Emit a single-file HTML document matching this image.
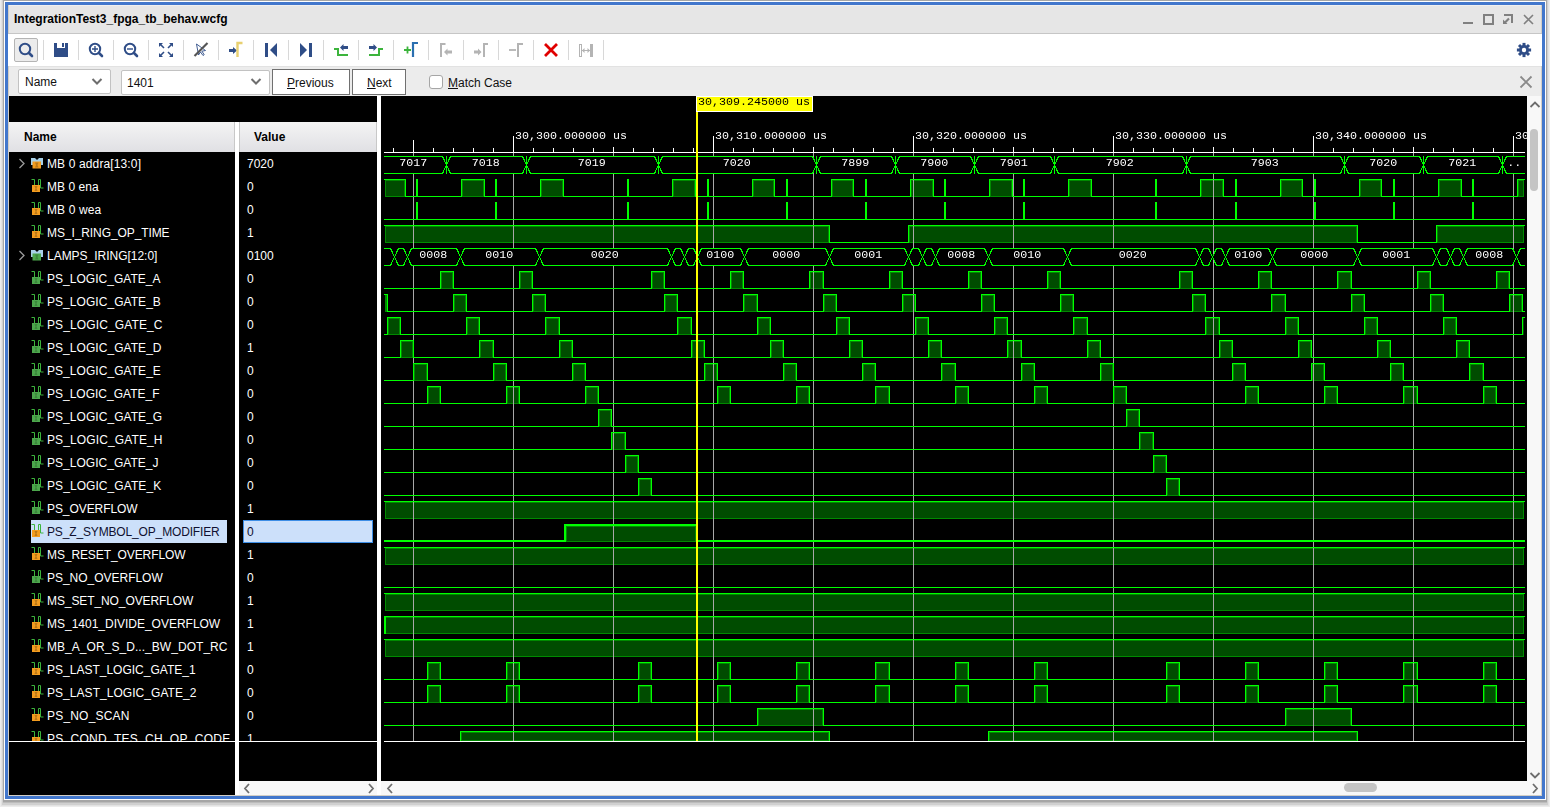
<!DOCTYPE html>
<html><head><meta charset="utf-8"><style>
html,body{margin:0;padding:0;}
body{width:1550px;height:807px;position:relative;overflow:hidden;background:#fff;font-family:"Liberation Sans",sans-serif;}
.abs{position:absolute;}
.t12{font-size:12px;white-space:nowrap;}
</style></head><body>
<div class="abs" style="left:0;top:0;width:1550px;height:807px;background:#ececec"></div>
<div class="abs" style="left:1px;top:0;width:1548px;height:806px;background:#e2e2e2"></div>
<div class="abs" style="left:2px;top:0;width:1546px;height:805px;background:#d0d0d0"></div>
<div class="abs" style="left:3px;top:0;width:1544px;height:803px;background:#bcbcbc"></div>
<div class="abs" style="left:3px;top:0;width:1544px;height:802px;background:#a6a6a6"></div>
<div class="abs" style="left:4px;top:1px;width:1542px;height:799px;background:#fff"></div>
<div class="abs" style="left:5px;top:2px;width:1540px;height:797px;background:#4277cc"></div>
<div class="abs" style="left:8px;top:5px;width:1534px;height:791px;background:#d2cec6"></div>
<div class="abs" style="left:9px;top:5px;width:1532px;height:790px;background:#f0f0f0"></div>
<!-- title -->
<div class="abs" style="left:9px;top:6px;width:1532px;height:27px;background:#e6e6e6"></div>
<div class="abs" style="left:8px;top:33px;width:1534px;height:1px;background:#c6c6c6"></div>
<div class="abs t12" style="left:14px;top:11px;line-height:16px;font-weight:bold;color:#000">IntegrationTest3_fpga_tb_behav.wcfg</div>
<svg class="abs" style="left:1460px;top:10px" width="80" height="18" viewBox="1460 10 80 18">
<rect x="1463" y="22" width="10" height="2" fill="#808080"/>
<rect x="1484" y="15" width="9" height="9" stroke="#808080" stroke-width="2" fill="none"/>
<path d="M1504 15h8v8" stroke="#808080" stroke-width="2" fill="none"/><path d="M1509 18.5l-4 4" stroke="#808080" stroke-width="2.2"/><path d="M1503 19.5v4.5h4.5z" fill="#808080"/>
<path d="M1524 15l9 9M1533 15l-9 9" stroke="#808080" stroke-width="1.6"/>
</svg>
<!-- toolbar -->
<div class="abs" style="left:8px;top:34px;width:1534px;height:32px;background:#fff"></div>
<div class="abs" style="left:43px;top:40px;width:1px;height:20px;background:#d8d8d8"></div><div class="abs" style="left:78px;top:40px;width:1px;height:20px;background:#d8d8d8"></div><div class="abs" style="left:113px;top:40px;width:1px;height:20px;background:#d8d8d8"></div><div class="abs" style="left:148px;top:40px;width:1px;height:20px;background:#d8d8d8"></div><div class="abs" style="left:183px;top:40px;width:1px;height:20px;background:#d8d8d8"></div><div class="abs" style="left:218px;top:40px;width:1px;height:20px;background:#d8d8d8"></div><div class="abs" style="left:253px;top:40px;width:1px;height:20px;background:#d8d8d8"></div><div class="abs" style="left:288px;top:40px;width:1px;height:20px;background:#d8d8d8"></div><div class="abs" style="left:323px;top:40px;width:1px;height:20px;background:#d8d8d8"></div><div class="abs" style="left:358px;top:40px;width:1px;height:20px;background:#d8d8d8"></div><div class="abs" style="left:393px;top:40px;width:1px;height:20px;background:#d8d8d8"></div><div class="abs" style="left:428px;top:40px;width:1px;height:20px;background:#d8d8d8"></div><div class="abs" style="left:463px;top:40px;width:1px;height:20px;background:#d8d8d8"></div><div class="abs" style="left:498px;top:40px;width:1px;height:20px;background:#d8d8d8"></div><div class="abs" style="left:533px;top:40px;width:1px;height:20px;background:#d8d8d8"></div><div class="abs" style="left:568px;top:40px;width:1px;height:20px;background:#d8d8d8"></div><div class="abs" style="left:603px;top:40px;width:1px;height:20px;background:#d8d8d8"></div>
<div class="abs" style="left:14px;top:38px;width:22px;height:22px;background:#ececec;border:1px solid #b4b4b4;border-radius:2px"></div><svg class="abs" style="left:16px;top:40px" width="20" height="20" viewBox="16 40 20 20"><circle cx="25" cy="49" r="5.2" stroke="#2f4d87" stroke-width="2" fill="none"/><path d="M29 53l3 3" stroke="#2f4d87" stroke-width="2.6" stroke-linecap="round"/></svg><svg class="abs" style="left:51px;top:40px" width="20" height="20" viewBox="51 40 20 20"><path d="M54 43h3v5h8v-5h3v14h-14z" fill="#2f4d87"/><rect x="62" y="43" width="2" height="4" fill="#2f4d87"/></svg><svg class="abs" style="left:86px;top:40px" width="20" height="20" viewBox="86 40 20 20"><circle cx="95" cy="49" r="5.2" stroke="#2f4d87" stroke-width="2" fill="none"/><path d="M99 53l3 3" stroke="#2f4d87" stroke-width="2.6" stroke-linecap="round"/><path d="M92 49h6M95 46v6" stroke="#2f4d87" stroke-width="1.4"/></svg><svg class="abs" style="left:121px;top:40px" width="20" height="20" viewBox="121 40 20 20"><circle cx="130" cy="49" r="5.2" stroke="#2f4d87" stroke-width="2" fill="none"/><path d="M134 53l3 3" stroke="#2f4d87" stroke-width="2.6" stroke-linecap="round"/><path d="M127 49h6" stroke="#2f4d87" stroke-width="1.4"/></svg><svg class="abs" style="left:156px;top:40px" width="20" height="20" viewBox="156 40 20 20"><path d="M159 43h4l-4 4z M173 43v4l-4-4z M159 57v-4l4 4z M173 57h-4l4-4z" fill="#2f4d87"/><path d="M160 44l4 4 M172 44l-4 4 M160 56l4-4 M172 56l-4-4" stroke="#2f4d87" stroke-width="1.6"/></svg><svg class="abs" style="left:191px;top:40px" width="20" height="20" viewBox="191 40 20 20"><path d="M196.5 44l2 11 2-3 2.5 3.5 1.2-0.8-2.3-3.5 3.6-0.7z" stroke="#2f4d87" stroke-width="0.9" fill="none"/><path d="M194.5 56l13-13" stroke="#555" stroke-width="2.2"/></svg><svg class="abs" style="left:226px;top:40px" width="20" height="20" viewBox="226 40 20 20"><path d="M229 49h4v-2l4 3.5-4 3.5v-2h-4z" fill="#2f4d87"/><path d="M237.5 57v-14h5" stroke="#e8d070" stroke-width="2.4" fill="none"/></svg><svg class="abs" style="left:261px;top:40px" width="20" height="20" viewBox="261 40 20 20"><rect x="265" y="43" width="3" height="14" fill="#2f4d87"/><path d="M277 43v14l-7-7z" fill="#2f4d87"/></svg><svg class="abs" style="left:296px;top:40px" width="20" height="20" viewBox="296 40 20 20"><rect x="309" y="43" width="3" height="14" fill="#2f4d87"/><path d="M300 43v14l7-7z" fill="#2f4d87"/></svg><svg class="abs" style="left:331px;top:40px" width="20" height="20" viewBox="331 40 20 20"><path d="M334 49h4v6h10" stroke="#3cb43c" stroke-width="2" fill="none"/><path d="M340 47.5l3.5-3.5v2h4.5v3h-4.5v2z" fill="#2f4d87"/></svg><svg class="abs" style="left:366px;top:40px" width="20" height="20" viewBox="366 40 20 20"><path d="M369 55h10v-6h4" stroke="#3cb43c" stroke-width="2" fill="none"/><path d="M369 46h4.5v-2l3.5 3.5-3.5 3.5v-2h-4.5z" fill="#2f4d87"/></svg><svg class="abs" style="left:401px;top:40px" width="20" height="20" viewBox="401 40 20 20"><path d="M404 50h7M407.5 46.5v7" stroke="#3cb43c" stroke-width="1.8"/><path d="M413 57v-14h5" stroke="#2a6fb0" stroke-width="2.2" fill="none"/></svg><svg class="abs" style="left:436px;top:40px" width="20" height="20" viewBox="436 40 20 20"><path d="M441 57v-13h4.5" stroke="#b4b4b4" stroke-width="2" fill="none"/><path d="M444 52l3.5-3.5v2h4.5v3h-4.5v2z" fill="#b4b4b4"/></svg><svg class="abs" style="left:471px;top:40px" width="20" height="20" viewBox="471 40 20 20"><path d="M474 50.5h4v-2l3.5 3.5-3.5 3.5v-2h-4z" fill="#b4b4b4"/><path d="M484 57v-13h4" stroke="#b4b4b4" stroke-width="2" fill="none"/></svg><svg class="abs" style="left:506px;top:40px" width="20" height="20" viewBox="506 40 20 20"><path d="M509 50h7" stroke="#b4b4b4" stroke-width="1.8"/><path d="M518 57v-13h5" stroke="#b4b4b4" stroke-width="2" fill="none"/></svg><svg class="abs" style="left:541px;top:40px" width="20" height="20" viewBox="541 40 20 20"><path d="M545 44l12 12M557 44l-12 12" stroke="#e00000" stroke-width="2.8"/></svg><svg class="abs" style="left:576px;top:40px" width="20" height="20" viewBox="576 40 20 20"><rect x="579.5" y="44.5" width="2" height="12" stroke="#b4b4b4" stroke-width="1" fill="none"/><rect x="590" y="44" width="3" height="13" fill="#b4b4b4"/><path d="M582 50.5h8" stroke="#b4b4b4" stroke-width="1"/><path d="M582 50.5l2.5-2.5v5z M590 50.5l-2.5-2.5v5z" fill="#b4b4b4"/></svg>
<svg class="abs" style="left:1515px;top:41px" width="18" height="18" viewBox="-9 -9 18 18"><g fill="#2f4d87"><rect x="-1.5" y="-7.1" width="3" height="4" transform="rotate(0)"/><rect x="-1.5" y="-7.1" width="3" height="4" transform="rotate(45)"/><rect x="-1.5" y="-7.1" width="3" height="4" transform="rotate(90)"/><rect x="-1.5" y="-7.1" width="3" height="4" transform="rotate(135)"/><rect x="-1.5" y="-7.1" width="3" height="4" transform="rotate(180)"/><rect x="-1.5" y="-7.1" width="3" height="4" transform="rotate(225)"/><rect x="-1.5" y="-7.1" width="3" height="4" transform="rotate(270)"/><rect x="-1.5" y="-7.1" width="3" height="4" transform="rotate(315)"/><circle r="4.9"/></g><circle r="2.2" fill="#fff"/></svg>
<!-- search bar -->
<div class="abs" style="left:9px;top:66px;width:1532px;height:30px;background:#ececec"></div><div class="abs" style="left:9px;top:66px;width:1532px;height:1px;background:#e2e2e2"></div>
<div class="abs" style="left:18px;top:69px;width:91px;height:23px;background:#fff;border:1px solid #c2c2c2;border-radius:2px"></div>
<div class="abs t12" style="left:25px;top:74px;line-height:16px;color:#111">Name</div>
<svg class="abs" style="left:91px;top:77px" width="12" height="9" viewBox="0 0 12 9"><path d="M1.5 2l4.5 4.5 4.5-4.5" stroke="#6e6e6e" stroke-width="2" fill="none"/></svg>
<div class="abs" style="left:121px;top:70px;width:147px;height:23px;background:#fff;border:1px solid #c2c2c2;border-radius:2px"></div>
<div class="abs t12" style="left:127px;top:75px;line-height:16px;color:#111">1401</div>
<svg class="abs" style="left:250px;top:77px" width="12" height="9" viewBox="0 0 12 9"><path d="M1.5 2l4.5 4.5 4.5-4.5" stroke="#6e6e6e" stroke-width="2" fill="none"/></svg>
<div class="abs" style="left:272px;top:69px;width:76px;height:24px;background:#fff;border:1px solid #707070"></div>
<div class="abs t12" style="left:287px;top:75px;line-height:16px;color:#111"><u>P</u>revious</div>
<div class="abs" style="left:352px;top:69px;width:52px;height:24px;background:#fff;border:1px solid #707070"></div>
<div class="abs t12" style="left:367px;top:75px;line-height:16px;color:#111"><u>N</u>ext</div>
<div class="abs" style="left:429px;top:75px;width:12px;height:12px;background:#fff;border:1px solid #a6a6a6;border-radius:3px"></div>
<div class="abs t12" style="left:448px;top:75px;line-height:16px;color:#111"><u>M</u>atch Case</div>
<svg class="abs" style="left:1518px;top:74px" width="16" height="16" viewBox="0 0 16 16"><path d="M2.5 2.5l11 11M13.5 2.5l-11 11" stroke="#8a8a8a" stroke-width="1.8"/></svg>
<!-- panels -->
<div class="abs" style="left:9px;top:96px;width:368px;height:26px;background:#000"></div>
<div class="abs" style="left:9px;top:122px;width:226px;height:673px;background:#000"></div>
<div class="abs" style="left:235px;top:122px;width:4px;height:673px;background:#fff"></div>
<div class="abs" style="left:239px;top:122px;width:138px;height:659px;background:#000"></div>
<div class="abs" style="left:377px;top:96px;width:4px;height:699px;background:#fff"></div>
<div class="abs" style="left:381px;top:96px;width:1146px;height:685px;background:#000"></div>
<div class="abs" style="left:1527px;top:96px;width:14px;height:685px;background:#f8f8f8"></div>
<div class="abs" style="left:239px;top:781px;width:138px;height:14px;background:#f8f8f8"></div>
<div class="abs" style="left:381px;top:781px;width:1160px;height:14px;background:#f8f8f8"></div>
<!-- headers -->
<div class="abs" style="left:9px;top:122px;width:225px;height:30px;background:linear-gradient(#f4f4f4,#e0e0e4);border-right:1px solid #c8c8c8"></div>
<div class="abs" style="left:239px;top:122px;width:136px;height:30px;background:linear-gradient(#f4f4f4,#e0e0e4);border-right:1px solid #c8c8c8;border-left:1px solid #c8c8c8"></div>
<div class="abs t12" style="left:24px;top:129px;line-height:16px;font-weight:bold;color:#000">Name</div>
<div class="abs t12" style="left:254px;top:129px;line-height:16px;font-weight:bold;color:#000">Value</div>
<!-- list -->
<div class="abs" style="left:9px;top:152px;width:226px;height:589px;overflow:hidden">
<div class="abs" style="left:-9px;top:-152px;width:300px;height:800px"><svg class="abs" style="left:18px;top:158px" width="8" height="11" viewBox="0 0 8 11"><path d="M1.5 1l4.5 4.5-4.5 4.5" stroke="#9a9a9a" stroke-width="1.3" fill="none"/></svg><svg class="abs" style="left:31px;top:158px" width="13" height="12" viewBox="0 0 13 12"><path d="M0 0h4l2 2 2-2h4v7h-12z" fill="#a8d0e8"/><rect x="1.5" y="3.5" width="8.5" height="7" fill="#f39c1f"/><path d="M4 4.5h3.5l-1 2.5 1 2.5h-3.5l1-2.5z" fill="#8a5a10" opacity="0.55"/></svg><div class="abs t12" style="left:47px;top:153px;line-height:23px;color:#fff;letter-spacing:0.127px">MB 0 addra[13:0]</div><svg class="abs" style="left:31px;top:179px" width="13" height="14" viewBox="0 0 13 14"><path d="M0.5 0.5h3v6 M7.5 6v-5.5h2v8.5h3" stroke="#3cb43c" stroke-width="1" fill="none"/><rect x="1" y="6" width="8" height="7" fill="#f39c1f"/><path d="M3.5 7h3l-1 2.5 1 2.5h-3l1-2.5z" fill="#8a5a10" opacity="0.55"/></svg><div class="abs t12" style="left:47px;top:176px;line-height:23px;color:#fff;letter-spacing:0.043px">MB 0 ena</div><svg class="abs" style="left:31px;top:202px" width="13" height="14" viewBox="0 0 13 14"><path d="M0.5 0.5h3v6 M7.5 6v-5.5h2v8.5h3" stroke="#3cb43c" stroke-width="1" fill="none"/><rect x="1" y="6" width="8" height="7" fill="#f39c1f"/><path d="M3.5 7h3l-1 2.5 1 2.5h-3l1-2.5z" fill="#8a5a10" opacity="0.55"/></svg><div class="abs t12" style="left:47px;top:199px;line-height:23px;color:#fff;letter-spacing:0.114px">MB 0 wea</div><svg class="abs" style="left:31px;top:225px" width="13" height="14" viewBox="0 0 13 14"><path d="M0.5 0.5h3v6 M7.5 6v-5.5h2v8.5h3" stroke="#3cb43c" stroke-width="1" fill="none"/><rect x="1" y="6" width="8" height="7" fill="#f39c1f"/><path d="M3.5 7h3l-1 2.5 1 2.5h-3l1-2.5z" fill="#8a5a10" opacity="0.55"/></svg><div class="abs t12" style="left:47px;top:222px;line-height:23px;color:#fff;letter-spacing:-0.088px">MS_I_RING_OP_TIME</div><svg class="abs" style="left:18px;top:250px" width="8" height="11" viewBox="0 0 8 11"><path d="M1.5 1l4.5 4.5-4.5 4.5" stroke="#9a9a9a" stroke-width="1.3" fill="none"/></svg><svg class="abs" style="left:31px;top:250px" width="13" height="12" viewBox="0 0 13 12"><path d="M0 0h4l2 2 2-2h4v7h-12z" fill="#a8d0e8"/><rect x="1.5" y="3.5" width="8.5" height="7" fill="#4ca64c"/><path d="M4 4.5h3.5l-1 2.5 1 2.5h-3.5l1-2.5z" fill="#2d6e2d" opacity="0.55"/></svg><div class="abs t12" style="left:47px;top:245px;line-height:23px;color:#fff;letter-spacing:-0.019px">LAMPS_IRING[12:0]</div><svg class="abs" style="left:31px;top:271px" width="13" height="14" viewBox="0 0 13 14"><path d="M0.5 0.5h3v6 M7.5 6v-5.5h2v8.5h3" stroke="#3cb43c" stroke-width="1" fill="none"/><rect x="1" y="6" width="8" height="7" fill="#4ca64c"/><path d="M3.5 7h3l-1 2.5 1 2.5h-3l1-2.5z" fill="#2d6e2d" opacity="0.55"/></svg><div class="abs t12" style="left:47px;top:268px;line-height:23px;color:#fff;letter-spacing:0.021px">PS_LOGIC_GATE_A</div><svg class="abs" style="left:31px;top:294px" width="13" height="14" viewBox="0 0 13 14"><path d="M0.5 0.5h3v6 M7.5 6v-5.5h2v8.5h3" stroke="#3cb43c" stroke-width="1" fill="none"/><rect x="1" y="6" width="8" height="7" fill="#4ca64c"/><path d="M3.5 7h3l-1 2.5 1 2.5h-3l1-2.5z" fill="#2d6e2d" opacity="0.55"/></svg><div class="abs t12" style="left:47px;top:291px;line-height:23px;color:#fff;letter-spacing:0.05px">PS_LOGIC_GATE_B</div><svg class="abs" style="left:31px;top:317px" width="13" height="14" viewBox="0 0 13 14"><path d="M0.5 0.5h3v6 M7.5 6v-5.5h2v8.5h3" stroke="#3cb43c" stroke-width="1" fill="none"/><rect x="1" y="6" width="8" height="7" fill="#4ca64c"/><path d="M3.5 7h3l-1 2.5 1 2.5h-3l1-2.5z" fill="#2d6e2d" opacity="0.55"/></svg><div class="abs t12" style="left:47px;top:314px;line-height:23px;color:#fff;letter-spacing:0.121px">PS_LOGIC_GATE_C</div><svg class="abs" style="left:31px;top:340px" width="13" height="14" viewBox="0 0 13 14"><path d="M0.5 0.5h3v6 M7.5 6v-5.5h2v8.5h3" stroke="#3cb43c" stroke-width="1" fill="none"/><rect x="1" y="6" width="8" height="7" fill="#4ca64c"/><path d="M3.5 7h3l-1 2.5 1 2.5h-3l1-2.5z" fill="#2d6e2d" opacity="0.55"/></svg><div class="abs t12" style="left:47px;top:337px;line-height:23px;color:#fff;letter-spacing:0.05px">PS_LOGIC_GATE_D</div><svg class="abs" style="left:31px;top:363px" width="13" height="14" viewBox="0 0 13 14"><path d="M0.5 0.5h3v6 M7.5 6v-5.5h2v8.5h3" stroke="#3cb43c" stroke-width="1" fill="none"/><rect x="1" y="6" width="8" height="7" fill="#4ca64c"/><path d="M3.5 7h3l-1 2.5 1 2.5h-3l1-2.5z" fill="#2d6e2d" opacity="0.55"/></svg><div class="abs t12" style="left:47px;top:360px;line-height:23px;color:#fff;letter-spacing:0.05px">PS_LOGIC_GATE_E</div><svg class="abs" style="left:31px;top:386px" width="13" height="14" viewBox="0 0 13 14"><path d="M0.5 0.5h3v6 M7.5 6v-5.5h2v8.5h3" stroke="#3cb43c" stroke-width="1" fill="none"/><rect x="1" y="6" width="8" height="7" fill="#4ca64c"/><path d="M3.5 7h3l-1 2.5 1 2.5h-3l1-2.5z" fill="#2d6e2d" opacity="0.55"/></svg><div class="abs t12" style="left:47px;top:383px;line-height:23px;color:#fff;letter-spacing:0.0px">PS_LOGIC_GATE_F</div><svg class="abs" style="left:31px;top:409px" width="13" height="14" viewBox="0 0 13 14"><path d="M0.5 0.5h3v6 M7.5 6v-5.5h2v8.5h3" stroke="#3cb43c" stroke-width="1" fill="none"/><rect x="1" y="6" width="8" height="7" fill="#4ca64c"/><path d="M3.5 7h3l-1 2.5 1 2.5h-3l1-2.5z" fill="#2d6e2d" opacity="0.55"/></svg><div class="abs t12" style="left:47px;top:406px;line-height:23px;color:#fff;letter-spacing:0.05px">PS_LOGIC_GATE_G</div><svg class="abs" style="left:31px;top:432px" width="13" height="14" viewBox="0 0 13 14"><path d="M0.5 0.5h3v6 M7.5 6v-5.5h2v8.5h3" stroke="#3cb43c" stroke-width="1" fill="none"/><rect x="1" y="6" width="8" height="7" fill="#4ca64c"/><path d="M3.5 7h3l-1 2.5 1 2.5h-3l1-2.5z" fill="#2d6e2d" opacity="0.55"/></svg><div class="abs t12" style="left:47px;top:429px;line-height:23px;color:#fff;letter-spacing:0.121px">PS_LOGIC_GATE_H</div><svg class="abs" style="left:31px;top:455px" width="13" height="14" viewBox="0 0 13 14"><path d="M0.5 0.5h3v6 M7.5 6v-5.5h2v8.5h3" stroke="#3cb43c" stroke-width="1" fill="none"/><rect x="1" y="6" width="8" height="7" fill="#4ca64c"/><path d="M3.5 7h3l-1 2.5 1 2.5h-3l1-2.5z" fill="#2d6e2d" opacity="0.55"/></svg><div class="abs t12" style="left:47px;top:452px;line-height:23px;color:#fff;letter-spacing:0.021px">PS_LOGIC_GATE_J</div><svg class="abs" style="left:31px;top:478px" width="13" height="14" viewBox="0 0 13 14"><path d="M0.5 0.5h3v6 M7.5 6v-5.5h2v8.5h3" stroke="#3cb43c" stroke-width="1" fill="none"/><rect x="1" y="6" width="8" height="7" fill="#4ca64c"/><path d="M3.5 7h3l-1 2.5 1 2.5h-3l1-2.5z" fill="#2d6e2d" opacity="0.55"/></svg><div class="abs t12" style="left:47px;top:475px;line-height:23px;color:#fff;letter-spacing:0.071px">PS_LOGIC_GATE_K</div><svg class="abs" style="left:31px;top:501px" width="13" height="14" viewBox="0 0 13 14"><path d="M0.5 0.5h3v6 M7.5 6v-5.5h2v8.5h3" stroke="#3cb43c" stroke-width="1" fill="none"/><rect x="1" y="6" width="8" height="7" fill="#4ca64c"/><path d="M3.5 7h3l-1 2.5 1 2.5h-3l1-2.5z" fill="#2d6e2d" opacity="0.55"/></svg><div class="abs t12" style="left:47px;top:498px;line-height:23px;color:#fff;letter-spacing:-0.07px">PS_OVERFLOW</div><div class="abs" style="left:31px;top:520px;width:196px;height:23px;background:#cce0fa"></div><svg class="abs" style="left:31px;top:524px" width="13" height="14" viewBox="0 0 13 14"><path d="M0.5 0.5h3v6 M7.5 6v-5.5h2v8.5h3" stroke="#3cb43c" stroke-width="1" fill="none"/><rect x="1" y="6" width="8" height="7" fill="#f39c1f"/><path d="M3.5 7h3l-1 2.5 1 2.5h-3l1-2.5z" fill="#8a5a10" opacity="0.55"/></svg><div class="abs t12" style="left:47px;top:521px;line-height:23px;color:#101030;letter-spacing:-0.15px">PS_Z_SYMBOL_OP_MODIFIER</div><svg class="abs" style="left:31px;top:547px" width="13" height="14" viewBox="0 0 13 14"><path d="M0.5 0.5h3v6 M7.5 6v-5.5h2v8.5h3" stroke="#3cb43c" stroke-width="1" fill="none"/><rect x="1" y="6" width="8" height="7" fill="#f39c1f"/><path d="M3.5 7h3l-1 2.5 1 2.5h-3l1-2.5z" fill="#8a5a10" opacity="0.55"/></svg><div class="abs t12" style="left:47px;top:544px;line-height:23px;color:#fff;letter-spacing:-0.094px">MS_RESET_OVERFLOW</div><svg class="abs" style="left:31px;top:570px" width="13" height="14" viewBox="0 0 13 14"><path d="M0.5 0.5h3v6 M7.5 6v-5.5h2v8.5h3" stroke="#3cb43c" stroke-width="1" fill="none"/><rect x="1" y="6" width="8" height="7" fill="#4ca64c"/><path d="M3.5 7h3l-1 2.5 1 2.5h-3l1-2.5z" fill="#2d6e2d" opacity="0.55"/></svg><div class="abs t12" style="left:47px;top:567px;line-height:23px;color:#fff;letter-spacing:-0.023px">PS_NO_OVERFLOW</div><svg class="abs" style="left:31px;top:593px" width="13" height="14" viewBox="0 0 13 14"><path d="M0.5 0.5h3v6 M7.5 6v-5.5h2v8.5h3" stroke="#3cb43c" stroke-width="1" fill="none"/><rect x="1" y="6" width="8" height="7" fill="#f39c1f"/><path d="M3.5 7h3l-1 2.5 1 2.5h-3l1-2.5z" fill="#8a5a10" opacity="0.55"/></svg><div class="abs t12" style="left:47px;top:590px;line-height:23px;color:#fff;letter-spacing:-0.094px">MS_SET_NO_OVERFLOW</div><svg class="abs" style="left:31px;top:616px" width="13" height="14" viewBox="0 0 13 14"><path d="M0.5 0.5h3v6 M7.5 6v-5.5h2v8.5h3" stroke="#3cb43c" stroke-width="1" fill="none"/><rect x="1" y="6" width="8" height="7" fill="#f39c1f"/><path d="M3.5 7h3l-1 2.5 1 2.5h-3l1-2.5z" fill="#8a5a10" opacity="0.55"/></svg><div class="abs t12" style="left:47px;top:613px;line-height:23px;color:#fff;letter-spacing:-0.009px">MS_1401_DIVIDE_OVERFLOW</div><svg class="abs" style="left:31px;top:639px" width="13" height="14" viewBox="0 0 13 14"><path d="M0.5 0.5h3v6 M7.5 6v-5.5h2v8.5h3" stroke="#3cb43c" stroke-width="1" fill="none"/><rect x="1" y="6" width="8" height="7" fill="#f39c1f"/><path d="M3.5 7h3l-1 2.5 1 2.5h-3l1-2.5z" fill="#8a5a10" opacity="0.55"/></svg><div class="abs t12" style="left:47px;top:636px;line-height:23px;color:#fff;letter-spacing:0.048px">MB_A_OR_S_D..._BW_DOT_RC</div><svg class="abs" style="left:31px;top:662px" width="13" height="14" viewBox="0 0 13 14"><path d="M0.5 0.5h3v6 M7.5 6v-5.5h2v8.5h3" stroke="#3cb43c" stroke-width="1" fill="none"/><rect x="1" y="6" width="8" height="7" fill="#f39c1f"/><path d="M3.5 7h3l-1 2.5 1 2.5h-3l1-2.5z" fill="#8a5a10" opacity="0.55"/></svg><div class="abs t12" style="left:47px;top:659px;line-height:23px;color:#fff;letter-spacing:0.005px">PS_LAST_LOGIC_GATE_1</div><svg class="abs" style="left:31px;top:685px" width="13" height="14" viewBox="0 0 13 14"><path d="M0.5 0.5h3v6 M7.5 6v-5.5h2v8.5h3" stroke="#3cb43c" stroke-width="1" fill="none"/><rect x="1" y="6" width="8" height="7" fill="#f39c1f"/><path d="M3.5 7h3l-1 2.5 1 2.5h-3l1-2.5z" fill="#8a5a10" opacity="0.55"/></svg><div class="abs t12" style="left:47px;top:682px;line-height:23px;color:#fff;letter-spacing:0.047px">PS_LAST_LOGIC_GATE_2</div><svg class="abs" style="left:31px;top:708px" width="13" height="14" viewBox="0 0 13 14"><path d="M0.5 0.5h3v6 M7.5 6v-5.5h2v8.5h3" stroke="#3cb43c" stroke-width="1" fill="none"/><rect x="1" y="6" width="8" height="7" fill="#f39c1f"/><path d="M3.5 7h3l-1 2.5 1 2.5h-3l1-2.5z" fill="#8a5a10" opacity="0.55"/></svg><div class="abs t12" style="left:47px;top:705px;line-height:23px;color:#fff;letter-spacing:0.189px">PS_NO_SCAN</div><svg class="abs" style="left:31px;top:731px" width="13" height="14" viewBox="0 0 13 14"><path d="M0.5 0.5h3v6 M7.5 6v-5.5h2v8.5h3" stroke="#3cb43c" stroke-width="1" fill="none"/><rect x="1" y="6" width="8" height="7" fill="#f39c1f"/><path d="M3.5 7h3l-1 2.5 1 2.5h-3l1-2.5z" fill="#8a5a10" opacity="0.55"/></svg><div class="abs t12" style="left:47px;top:728px;line-height:23px;color:#fff;letter-spacing:0.276px">PS_COND_TES_CH_OP_CODE</div></div>
</div>
<div class="abs" style="left:239px;top:152px;width:138px;height:589px;overflow:hidden">
<div class="abs" style="left:-239px;top:-152px;width:400px;height:800px"><div class="abs t12" style="left:247px;top:153px;line-height:23px;color:#fff">7020</div><div class="abs t12" style="left:247px;top:176px;line-height:23px;color:#fff">0</div><div class="abs t12" style="left:247px;top:199px;line-height:23px;color:#fff">0</div><div class="abs t12" style="left:247px;top:222px;line-height:23px;color:#fff">1</div><div class="abs t12" style="left:247px;top:245px;line-height:23px;color:#fff">0100</div><div class="abs t12" style="left:247px;top:268px;line-height:23px;color:#fff">0</div><div class="abs t12" style="left:247px;top:291px;line-height:23px;color:#fff">0</div><div class="abs t12" style="left:247px;top:314px;line-height:23px;color:#fff">0</div><div class="abs t12" style="left:247px;top:337px;line-height:23px;color:#fff">1</div><div class="abs t12" style="left:247px;top:360px;line-height:23px;color:#fff">0</div><div class="abs t12" style="left:247px;top:383px;line-height:23px;color:#fff">0</div><div class="abs t12" style="left:247px;top:406px;line-height:23px;color:#fff">0</div><div class="abs t12" style="left:247px;top:429px;line-height:23px;color:#fff">0</div><div class="abs t12" style="left:247px;top:452px;line-height:23px;color:#fff">0</div><div class="abs t12" style="left:247px;top:475px;line-height:23px;color:#fff">0</div><div class="abs t12" style="left:247px;top:498px;line-height:23px;color:#fff">1</div><div class="abs" style="left:243px;top:520px;width:128px;height:21px;background:#cce0fa;border:1px solid #3d8ee6"></div><div class="abs t12" style="left:247px;top:521px;line-height:23px;color:#101030">0</div><div class="abs t12" style="left:247px;top:544px;line-height:23px;color:#fff">1</div><div class="abs t12" style="left:247px;top:567px;line-height:23px;color:#fff">0</div><div class="abs t12" style="left:247px;top:590px;line-height:23px;color:#fff">1</div><div class="abs t12" style="left:247px;top:613px;line-height:23px;color:#fff">1</div><div class="abs t12" style="left:247px;top:636px;line-height:23px;color:#fff">1</div><div class="abs t12" style="left:247px;top:659px;line-height:23px;color:#fff">0</div><div class="abs t12" style="left:247px;top:682px;line-height:23px;color:#fff">0</div><div class="abs t12" style="left:247px;top:705px;line-height:23px;color:#fff">0</div><div class="abs t12" style="left:247px;top:728px;line-height:23px;color:#fff">1</div></div>
</div>
<div class="abs" style="left:9px;top:741px;width:226px;height:1px;background:#fff"></div>
<div class="abs" style="left:239px;top:741px;width:138px;height:1px;background:#fff"></div>
<svg class="abs" style="left:381px;top:96px" width="1146" height="685" viewBox="381 96 1146 685" shape-rendering="crispEdges">
<g><rect x="385" y="180" width="20" height="17" fill="#004c00"/><rect x="385.5" y="180.5" width="19" height="16" fill="none" stroke="#008a00" stroke-width="1"/><rect x="462" y="180" width="22" height="17" fill="#004c00"/><rect x="462.5" y="180.5" width="21" height="16" fill="none" stroke="#008a00" stroke-width="1"/><rect x="541" y="180" width="22" height="17" fill="#004c00"/><rect x="541.5" y="180.5" width="21" height="16" fill="none" stroke="#008a00" stroke-width="1"/><rect x="673" y="180" width="22" height="17" fill="#004c00"/><rect x="673.5" y="180.5" width="21" height="16" fill="none" stroke="#008a00" stroke-width="1"/><rect x="753" y="180" width="21" height="17" fill="#004c00"/><rect x="753.5" y="180.5" width="20" height="16" fill="none" stroke="#008a00" stroke-width="1"/><rect x="832" y="180" width="21" height="17" fill="#004c00"/><rect x="832.5" y="180.5" width="20" height="16" fill="none" stroke="#008a00" stroke-width="1"/><rect x="911" y="180" width="22" height="17" fill="#004c00"/><rect x="911.5" y="180.5" width="21" height="16" fill="none" stroke="#008a00" stroke-width="1"/><rect x="990" y="180" width="22" height="17" fill="#004c00"/><rect x="990.5" y="180.5" width="21" height="16" fill="none" stroke="#008a00" stroke-width="1"/><rect x="1069" y="180" width="22" height="17" fill="#004c00"/><rect x="1069.5" y="180.5" width="21" height="16" fill="none" stroke="#008a00" stroke-width="1"/><rect x="1201" y="180" width="22" height="17" fill="#004c00"/><rect x="1201.5" y="180.5" width="21" height="16" fill="none" stroke="#008a00" stroke-width="1"/><rect x="1281" y="180" width="21" height="17" fill="#004c00"/><rect x="1281.5" y="180.5" width="20" height="16" fill="none" stroke="#008a00" stroke-width="1"/><rect x="1360" y="180" width="21" height="17" fill="#004c00"/><rect x="1360.5" y="180.5" width="20" height="16" fill="none" stroke="#008a00" stroke-width="1"/><rect x="1439" y="180" width="22" height="17" fill="#004c00"/><rect x="1439.5" y="180.5" width="21" height="16" fill="none" stroke="#008a00" stroke-width="1"/><rect x="1518" y="180" width="6" height="17" fill="#004c00"/><rect x="1518.5" y="180.5" width="5" height="16" fill="none" stroke="#008a00" stroke-width="1"/><rect x="385" y="226" width="444" height="17" fill="#004c00"/><rect x="385.5" y="226.5" width="443" height="16" fill="none" stroke="#008a00" stroke-width="1"/><rect x="909" y="226" width="448" height="17" fill="#004c00"/><rect x="909.5" y="226.5" width="447" height="16" fill="none" stroke="#008a00" stroke-width="1"/><rect x="1437" y="226" width="87" height="17" fill="#004c00"/><rect x="1437.5" y="226.5" width="86" height="16" fill="none" stroke="#008a00" stroke-width="1"/><rect x="441" y="272" width="12" height="17" fill="#004c00"/><rect x="441.5" y="272.5" width="11" height="16" fill="none" stroke="#008a00" stroke-width="1"/><rect x="520" y="272" width="12" height="17" fill="#004c00"/><rect x="520.5" y="272.5" width="11" height="16" fill="none" stroke="#008a00" stroke-width="1"/><rect x="652" y="272" width="12" height="17" fill="#004c00"/><rect x="652.5" y="272.5" width="11" height="16" fill="none" stroke="#008a00" stroke-width="1"/><rect x="731" y="272" width="12" height="17" fill="#004c00"/><rect x="731.5" y="272.5" width="11" height="16" fill="none" stroke="#008a00" stroke-width="1"/><rect x="810" y="272" width="13" height="17" fill="#004c00"/><rect x="810.5" y="272.5" width="12" height="16" fill="none" stroke="#008a00" stroke-width="1"/><rect x="890" y="272" width="12" height="17" fill="#004c00"/><rect x="890.5" y="272.5" width="11" height="16" fill="none" stroke="#008a00" stroke-width="1"/><rect x="969" y="272" width="12" height="17" fill="#004c00"/><rect x="969.5" y="272.5" width="11" height="16" fill="none" stroke="#008a00" stroke-width="1"/><rect x="1048" y="272" width="12" height="17" fill="#004c00"/><rect x="1048.5" y="272.5" width="11" height="16" fill="none" stroke="#008a00" stroke-width="1"/><rect x="1180" y="272" width="12" height="17" fill="#004c00"/><rect x="1180.5" y="272.5" width="11" height="16" fill="none" stroke="#008a00" stroke-width="1"/><rect x="1259" y="272" width="12" height="17" fill="#004c00"/><rect x="1259.5" y="272.5" width="11" height="16" fill="none" stroke="#008a00" stroke-width="1"/><rect x="1338" y="272" width="13" height="17" fill="#004c00"/><rect x="1338.5" y="272.5" width="12" height="16" fill="none" stroke="#008a00" stroke-width="1"/><rect x="1418" y="272" width="12" height="17" fill="#004c00"/><rect x="1418.5" y="272.5" width="11" height="16" fill="none" stroke="#008a00" stroke-width="1"/><rect x="1497" y="272" width="12" height="17" fill="#004c00"/><rect x="1497.5" y="272.5" width="11" height="16" fill="none" stroke="#008a00" stroke-width="1"/><rect x="385" y="295" width="2" height="17" fill="#004c00"/><rect x="385.5" y="295.5" width="1" height="16" fill="none" stroke="#008a00" stroke-width="1"/><rect x="454" y="295" width="12" height="17" fill="#004c00"/><rect x="454.5" y="295.5" width="11" height="16" fill="none" stroke="#008a00" stroke-width="1"/><rect x="533" y="295" width="12" height="17" fill="#004c00"/><rect x="533.5" y="295.5" width="11" height="16" fill="none" stroke="#008a00" stroke-width="1"/><rect x="665" y="295" width="12" height="17" fill="#004c00"/><rect x="665.5" y="295.5" width="11" height="16" fill="none" stroke="#008a00" stroke-width="1"/><rect x="744" y="295" width="13" height="17" fill="#004c00"/><rect x="744.5" y="295.5" width="12" height="16" fill="none" stroke="#008a00" stroke-width="1"/><rect x="824" y="295" width="12" height="17" fill="#004c00"/><rect x="824.5" y="295.5" width="11" height="16" fill="none" stroke="#008a00" stroke-width="1"/><rect x="903" y="295" width="12" height="17" fill="#004c00"/><rect x="903.5" y="295.5" width="11" height="16" fill="none" stroke="#008a00" stroke-width="1"/><rect x="982" y="295" width="12" height="17" fill="#004c00"/><rect x="982.5" y="295.5" width="11" height="16" fill="none" stroke="#008a00" stroke-width="1"/><rect x="1061" y="295" width="12" height="17" fill="#004c00"/><rect x="1061.5" y="295.5" width="11" height="16" fill="none" stroke="#008a00" stroke-width="1"/><rect x="1193" y="295" width="12" height="17" fill="#004c00"/><rect x="1193.5" y="295.5" width="11" height="16" fill="none" stroke="#008a00" stroke-width="1"/><rect x="1272" y="295" width="13" height="17" fill="#004c00"/><rect x="1272.5" y="295.5" width="12" height="16" fill="none" stroke="#008a00" stroke-width="1"/><rect x="1352" y="295" width="12" height="17" fill="#004c00"/><rect x="1352.5" y="295.5" width="11" height="16" fill="none" stroke="#008a00" stroke-width="1"/><rect x="1431" y="295" width="12" height="17" fill="#004c00"/><rect x="1431.5" y="295.5" width="11" height="16" fill="none" stroke="#008a00" stroke-width="1"/><rect x="1510" y="295" width="12" height="17" fill="#004c00"/><rect x="1510.5" y="295.5" width="11" height="16" fill="none" stroke="#008a00" stroke-width="1"/><rect x="388" y="318" width="12" height="17" fill="#004c00"/><rect x="388.5" y="318.5" width="11" height="16" fill="none" stroke="#008a00" stroke-width="1"/><rect x="467" y="318" width="12" height="17" fill="#004c00"/><rect x="467.5" y="318.5" width="11" height="16" fill="none" stroke="#008a00" stroke-width="1"/><rect x="546" y="318" width="13" height="17" fill="#004c00"/><rect x="546.5" y="318.5" width="12" height="16" fill="none" stroke="#008a00" stroke-width="1"/><rect x="678" y="318" width="13" height="17" fill="#004c00"/><rect x="678.5" y="318.5" width="12" height="16" fill="none" stroke="#008a00" stroke-width="1"/><rect x="758" y="318" width="12" height="17" fill="#004c00"/><rect x="758.5" y="318.5" width="11" height="16" fill="none" stroke="#008a00" stroke-width="1"/><rect x="837" y="318" width="12" height="17" fill="#004c00"/><rect x="837.5" y="318.5" width="11" height="16" fill="none" stroke="#008a00" stroke-width="1"/><rect x="916" y="318" width="12" height="17" fill="#004c00"/><rect x="916.5" y="318.5" width="11" height="16" fill="none" stroke="#008a00" stroke-width="1"/><rect x="995" y="318" width="12" height="17" fill="#004c00"/><rect x="995.5" y="318.5" width="11" height="16" fill="none" stroke="#008a00" stroke-width="1"/><rect x="1074" y="318" width="13" height="17" fill="#004c00"/><rect x="1074.5" y="318.5" width="12" height="16" fill="none" stroke="#008a00" stroke-width="1"/><rect x="1206" y="318" width="13" height="17" fill="#004c00"/><rect x="1206.5" y="318.5" width="12" height="16" fill="none" stroke="#008a00" stroke-width="1"/><rect x="1286" y="318" width="12" height="17" fill="#004c00"/><rect x="1286.5" y="318.5" width="11" height="16" fill="none" stroke="#008a00" stroke-width="1"/><rect x="1365" y="318" width="12" height="17" fill="#004c00"/><rect x="1365.5" y="318.5" width="11" height="16" fill="none" stroke="#008a00" stroke-width="1"/><rect x="1444" y="318" width="12" height="17" fill="#004c00"/><rect x="1444.5" y="318.5" width="11" height="16" fill="none" stroke="#008a00" stroke-width="1"/><rect x="1523" y="318" width="1" height="17" fill="#004c00"/><rect x="1523.5" y="318.5" width="0" height="16" fill="none" stroke="#008a00" stroke-width="1"/><rect x="401" y="341" width="12" height="17" fill="#004c00"/><rect x="401.5" y="341.5" width="11" height="16" fill="none" stroke="#008a00" stroke-width="1"/><rect x="480" y="341" width="13" height="17" fill="#004c00"/><rect x="480.5" y="341.5" width="12" height="16" fill="none" stroke="#008a00" stroke-width="1"/><rect x="560" y="341" width="12" height="17" fill="#004c00"/><rect x="560.5" y="341.5" width="11" height="16" fill="none" stroke="#008a00" stroke-width="1"/><rect x="692" y="341" width="12" height="17" fill="#004c00"/><rect x="692.5" y="341.5" width="11" height="16" fill="none" stroke="#008a00" stroke-width="1"/><rect x="771" y="341" width="12" height="17" fill="#004c00"/><rect x="771.5" y="341.5" width="11" height="16" fill="none" stroke="#008a00" stroke-width="1"/><rect x="850" y="341" width="12" height="17" fill="#004c00"/><rect x="850.5" y="341.5" width="11" height="16" fill="none" stroke="#008a00" stroke-width="1"/><rect x="929" y="341" width="12" height="17" fill="#004c00"/><rect x="929.5" y="341.5" width="11" height="16" fill="none" stroke="#008a00" stroke-width="1"/><rect x="1008" y="341" width="13" height="17" fill="#004c00"/><rect x="1008.5" y="341.5" width="12" height="16" fill="none" stroke="#008a00" stroke-width="1"/><rect x="1088" y="341" width="12" height="17" fill="#004c00"/><rect x="1088.5" y="341.5" width="11" height="16" fill="none" stroke="#008a00" stroke-width="1"/><rect x="1220" y="341" width="12" height="17" fill="#004c00"/><rect x="1220.5" y="341.5" width="11" height="16" fill="none" stroke="#008a00" stroke-width="1"/><rect x="1299" y="341" width="12" height="17" fill="#004c00"/><rect x="1299.5" y="341.5" width="11" height="16" fill="none" stroke="#008a00" stroke-width="1"/><rect x="1378" y="341" width="12" height="17" fill="#004c00"/><rect x="1378.5" y="341.5" width="11" height="16" fill="none" stroke="#008a00" stroke-width="1"/><rect x="1457" y="341" width="12" height="17" fill="#004c00"/><rect x="1457.5" y="341.5" width="11" height="16" fill="none" stroke="#008a00" stroke-width="1"/><rect x="414" y="364" width="13" height="17" fill="#004c00"/><rect x="414.5" y="364.5" width="12" height="16" fill="none" stroke="#008a00" stroke-width="1"/><rect x="494" y="364" width="12" height="17" fill="#004c00"/><rect x="494.5" y="364.5" width="11" height="16" fill="none" stroke="#008a00" stroke-width="1"/><rect x="573" y="364" width="12" height="17" fill="#004c00"/><rect x="573.5" y="364.5" width="11" height="16" fill="none" stroke="#008a00" stroke-width="1"/><rect x="705" y="364" width="12" height="17" fill="#004c00"/><rect x="705.5" y="364.5" width="11" height="16" fill="none" stroke="#008a00" stroke-width="1"/><rect x="784" y="364" width="12" height="17" fill="#004c00"/><rect x="784.5" y="364.5" width="11" height="16" fill="none" stroke="#008a00" stroke-width="1"/><rect x="863" y="364" width="12" height="17" fill="#004c00"/><rect x="863.5" y="364.5" width="11" height="16" fill="none" stroke="#008a00" stroke-width="1"/><rect x="942" y="364" width="13" height="17" fill="#004c00"/><rect x="942.5" y="364.5" width="12" height="16" fill="none" stroke="#008a00" stroke-width="1"/><rect x="1022" y="364" width="12" height="17" fill="#004c00"/><rect x="1022.5" y="364.5" width="11" height="16" fill="none" stroke="#008a00" stroke-width="1"/><rect x="1101" y="364" width="12" height="17" fill="#004c00"/><rect x="1101.5" y="364.5" width="11" height="16" fill="none" stroke="#008a00" stroke-width="1"/><rect x="1233" y="364" width="12" height="17" fill="#004c00"/><rect x="1233.5" y="364.5" width="11" height="16" fill="none" stroke="#008a00" stroke-width="1"/><rect x="1312" y="364" width="12" height="17" fill="#004c00"/><rect x="1312.5" y="364.5" width="11" height="16" fill="none" stroke="#008a00" stroke-width="1"/><rect x="1391" y="364" width="12" height="17" fill="#004c00"/><rect x="1391.5" y="364.5" width="11" height="16" fill="none" stroke="#008a00" stroke-width="1"/><rect x="1470" y="364" width="13" height="17" fill="#004c00"/><rect x="1470.5" y="364.5" width="12" height="16" fill="none" stroke="#008a00" stroke-width="1"/><rect x="428" y="387" width="12" height="17" fill="#004c00"/><rect x="428.5" y="387.5" width="11" height="16" fill="none" stroke="#008a00" stroke-width="1"/><rect x="507" y="387" width="12" height="17" fill="#004c00"/><rect x="507.5" y="387.5" width="11" height="16" fill="none" stroke="#008a00" stroke-width="1"/><rect x="586" y="387" width="12" height="17" fill="#004c00"/><rect x="586.5" y="387.5" width="11" height="16" fill="none" stroke="#008a00" stroke-width="1"/><rect x="718" y="387" width="12" height="17" fill="#004c00"/><rect x="718.5" y="387.5" width="11" height="16" fill="none" stroke="#008a00" stroke-width="1"/><rect x="797" y="387" width="12" height="17" fill="#004c00"/><rect x="797.5" y="387.5" width="11" height="16" fill="none" stroke="#008a00" stroke-width="1"/><rect x="876" y="387" width="13" height="17" fill="#004c00"/><rect x="876.5" y="387.5" width="12" height="16" fill="none" stroke="#008a00" stroke-width="1"/><rect x="956" y="387" width="12" height="17" fill="#004c00"/><rect x="956.5" y="387.5" width="11" height="16" fill="none" stroke="#008a00" stroke-width="1"/><rect x="1035" y="387" width="12" height="17" fill="#004c00"/><rect x="1035.5" y="387.5" width="11" height="16" fill="none" stroke="#008a00" stroke-width="1"/><rect x="1114" y="387" width="12" height="17" fill="#004c00"/><rect x="1114.5" y="387.5" width="11" height="16" fill="none" stroke="#008a00" stroke-width="1"/><rect x="1246" y="387" width="12" height="17" fill="#004c00"/><rect x="1246.5" y="387.5" width="11" height="16" fill="none" stroke="#008a00" stroke-width="1"/><rect x="1325" y="387" width="12" height="17" fill="#004c00"/><rect x="1325.5" y="387.5" width="11" height="16" fill="none" stroke="#008a00" stroke-width="1"/><rect x="1404" y="387" width="13" height="17" fill="#004c00"/><rect x="1404.5" y="387.5" width="12" height="16" fill="none" stroke="#008a00" stroke-width="1"/><rect x="1484" y="387" width="12" height="17" fill="#004c00"/><rect x="1484.5" y="387.5" width="11" height="16" fill="none" stroke="#008a00" stroke-width="1"/><rect x="599" y="410" width="12" height="17" fill="#004c00"/><rect x="599.5" y="410.5" width="11" height="16" fill="none" stroke="#008a00" stroke-width="1"/><rect x="1127" y="410" width="12" height="17" fill="#004c00"/><rect x="1127.5" y="410.5" width="11" height="16" fill="none" stroke="#008a00" stroke-width="1"/><rect x="612" y="433" width="13" height="17" fill="#004c00"/><rect x="612.5" y="433.5" width="12" height="16" fill="none" stroke="#008a00" stroke-width="1"/><rect x="1140" y="433" width="13" height="17" fill="#004c00"/><rect x="1140.5" y="433.5" width="12" height="16" fill="none" stroke="#008a00" stroke-width="1"/><rect x="626" y="456" width="12" height="17" fill="#004c00"/><rect x="626.5" y="456.5" width="11" height="16" fill="none" stroke="#008a00" stroke-width="1"/><rect x="1154" y="456" width="12" height="17" fill="#004c00"/><rect x="1154.5" y="456.5" width="11" height="16" fill="none" stroke="#008a00" stroke-width="1"/><rect x="639" y="479" width="12" height="17" fill="#004c00"/><rect x="639.5" y="479.5" width="11" height="16" fill="none" stroke="#008a00" stroke-width="1"/><rect x="1167" y="479" width="12" height="17" fill="#004c00"/><rect x="1167.5" y="479.5" width="11" height="16" fill="none" stroke="#008a00" stroke-width="1"/><rect x="385" y="502" width="1139" height="17" fill="#004c00"/><rect x="385.5" y="502.5" width="1138" height="16" fill="none" stroke="#008a00" stroke-width="1"/><rect x="566" y="526" width="130" height="16" fill="#004c00"/><rect x="566.5" y="526.5" width="129" height="15" fill="none" stroke="#008a00" stroke-width="1"/><rect x="385" y="548" width="1139" height="17" fill="#004c00"/><rect x="385.5" y="548.5" width="1138" height="16" fill="none" stroke="#008a00" stroke-width="1"/><rect x="385" y="594" width="1139" height="17" fill="#004c00"/><rect x="385.5" y="594.5" width="1138" height="16" fill="none" stroke="#008a00" stroke-width="1"/><rect x="385" y="617" width="1139" height="17" fill="#004c00"/><rect x="385.5" y="617.5" width="1138" height="16" fill="none" stroke="#008a00" stroke-width="1"/><rect x="385" y="640" width="1139" height="17" fill="#004c00"/><rect x="385.5" y="640.5" width="1138" height="16" fill="none" stroke="#008a00" stroke-width="1"/><rect x="428" y="663" width="12" height="17" fill="#004c00"/><rect x="428.5" y="663.5" width="11" height="16" fill="none" stroke="#008a00" stroke-width="1"/><rect x="507" y="663" width="12" height="17" fill="#004c00"/><rect x="507.5" y="663.5" width="11" height="16" fill="none" stroke="#008a00" stroke-width="1"/><rect x="639" y="663" width="12" height="17" fill="#004c00"/><rect x="639.5" y="663.5" width="11" height="16" fill="none" stroke="#008a00" stroke-width="1"/><rect x="718" y="663" width="12" height="17" fill="#004c00"/><rect x="718.5" y="663.5" width="11" height="16" fill="none" stroke="#008a00" stroke-width="1"/><rect x="797" y="663" width="12" height="17" fill="#004c00"/><rect x="797.5" y="663.5" width="11" height="16" fill="none" stroke="#008a00" stroke-width="1"/><rect x="876" y="663" width="13" height="17" fill="#004c00"/><rect x="876.5" y="663.5" width="12" height="16" fill="none" stroke="#008a00" stroke-width="1"/><rect x="956" y="663" width="12" height="17" fill="#004c00"/><rect x="956.5" y="663.5" width="11" height="16" fill="none" stroke="#008a00" stroke-width="1"/><rect x="1035" y="663" width="12" height="17" fill="#004c00"/><rect x="1035.5" y="663.5" width="11" height="16" fill="none" stroke="#008a00" stroke-width="1"/><rect x="1167" y="663" width="12" height="17" fill="#004c00"/><rect x="1167.5" y="663.5" width="11" height="16" fill="none" stroke="#008a00" stroke-width="1"/><rect x="1246" y="663" width="12" height="17" fill="#004c00"/><rect x="1246.5" y="663.5" width="11" height="16" fill="none" stroke="#008a00" stroke-width="1"/><rect x="1325" y="663" width="12" height="17" fill="#004c00"/><rect x="1325.5" y="663.5" width="11" height="16" fill="none" stroke="#008a00" stroke-width="1"/><rect x="1404" y="663" width="13" height="17" fill="#004c00"/><rect x="1404.5" y="663.5" width="12" height="16" fill="none" stroke="#008a00" stroke-width="1"/><rect x="1484" y="663" width="12" height="17" fill="#004c00"/><rect x="1484.5" y="663.5" width="11" height="16" fill="none" stroke="#008a00" stroke-width="1"/><rect x="428" y="686" width="12" height="17" fill="#004c00"/><rect x="428.5" y="686.5" width="11" height="16" fill="none" stroke="#008a00" stroke-width="1"/><rect x="507" y="686" width="12" height="17" fill="#004c00"/><rect x="507.5" y="686.5" width="11" height="16" fill="none" stroke="#008a00" stroke-width="1"/><rect x="639" y="686" width="12" height="17" fill="#004c00"/><rect x="639.5" y="686.5" width="11" height="16" fill="none" stroke="#008a00" stroke-width="1"/><rect x="718" y="686" width="12" height="17" fill="#004c00"/><rect x="718.5" y="686.5" width="11" height="16" fill="none" stroke="#008a00" stroke-width="1"/><rect x="797" y="686" width="12" height="17" fill="#004c00"/><rect x="797.5" y="686.5" width="11" height="16" fill="none" stroke="#008a00" stroke-width="1"/><rect x="876" y="686" width="13" height="17" fill="#004c00"/><rect x="876.5" y="686.5" width="12" height="16" fill="none" stroke="#008a00" stroke-width="1"/><rect x="956" y="686" width="12" height="17" fill="#004c00"/><rect x="956.5" y="686.5" width="11" height="16" fill="none" stroke="#008a00" stroke-width="1"/><rect x="1035" y="686" width="12" height="17" fill="#004c00"/><rect x="1035.5" y="686.5" width="11" height="16" fill="none" stroke="#008a00" stroke-width="1"/><rect x="1167" y="686" width="12" height="17" fill="#004c00"/><rect x="1167.5" y="686.5" width="11" height="16" fill="none" stroke="#008a00" stroke-width="1"/><rect x="1246" y="686" width="12" height="17" fill="#004c00"/><rect x="1246.5" y="686.5" width="11" height="16" fill="none" stroke="#008a00" stroke-width="1"/><rect x="1325" y="686" width="12" height="17" fill="#004c00"/><rect x="1325.5" y="686.5" width="11" height="16" fill="none" stroke="#008a00" stroke-width="1"/><rect x="1404" y="686" width="13" height="17" fill="#004c00"/><rect x="1404.5" y="686.5" width="12" height="16" fill="none" stroke="#008a00" stroke-width="1"/><rect x="1484" y="686" width="12" height="17" fill="#004c00"/><rect x="1484.5" y="686.5" width="11" height="16" fill="none" stroke="#008a00" stroke-width="1"/><rect x="758" y="709" width="65" height="17" fill="#004c00"/><rect x="758.5" y="709.5" width="64" height="16" fill="none" stroke="#008a00" stroke-width="1"/><rect x="1286" y="709" width="65" height="17" fill="#004c00"/><rect x="1286.5" y="709.5" width="64" height="16" fill="none" stroke="#008a00" stroke-width="1"/><rect x="461" y="732" width="368" height="9" fill="#004c00"/><rect x="461.5" y="732.5" width="367" height="8" fill="none" stroke="#008a00" stroke-width="1"/><rect x="989" y="732" width="368" height="9" fill="#004c00"/><rect x="989.5" y="732.5" width="367" height="8" fill="none" stroke="#008a00" stroke-width="1"/></g>
<g><rect x="413" y="153" width="1" height="588" fill="#a8a8a8"/><rect x="513" y="153" width="1" height="588" fill="#a8a8a8"/><rect x="613" y="153" width="1" height="588" fill="#a8a8a8"/><rect x="713" y="153" width="1" height="588" fill="#a8a8a8"/><rect x="813" y="153" width="1" height="588" fill="#a8a8a8"/><rect x="913" y="153" width="1" height="588" fill="#a8a8a8"/><rect x="1013" y="153" width="1" height="588" fill="#a8a8a8"/><rect x="1113" y="153" width="1" height="588" fill="#a8a8a8"/><rect x="1213" y="153" width="1" height="588" fill="#a8a8a8"/><rect x="1313" y="153" width="1" height="588" fill="#a8a8a8"/><rect x="1413" y="153" width="1" height="588" fill="#a8a8a8"/><rect x="1513" y="153" width="1" height="588" fill="#a8a8a8"/></g>
<g shape-rendering="auto"><polygon points="384.5,156.5 442.5,156.5 446.5,165.0 442.5,173.5 384.5,173.5" fill="#000"/><polygon points="446.5,165.0 450.5,156.5 522.5,156.5 526.5,165.0 522.5,173.5 450.5,173.5" fill="#000"/><polygon points="526.5,165.0 530.5,156.5 654.5,156.5 658.5,165.0 654.5,173.5 530.5,173.5" fill="#000"/><polygon points="658.5,165.0 662.5,156.5 812.5,156.5 816.5,165.0 812.5,173.5 662.5,173.5" fill="#000"/><polygon points="816.5,165.0 820.5,156.5 891.5,156.5 895.5,165.0 891.5,173.5 820.5,173.5" fill="#000"/><polygon points="895.5,165.0 899.5,156.5 970.5,156.5 974.5,165.0 970.5,173.5 899.5,173.5" fill="#000"/><polygon points="974.5,165.0 978.5,156.5 1050.5,156.5 1054.5,165.0 1050.5,173.5 978.5,173.5" fill="#000"/><polygon points="1054.5,165.0 1058.5,156.5 1182.5,156.5 1186.5,165.0 1182.5,173.5 1058.5,173.5" fill="#000"/><polygon points="1186.5,165.0 1190.5,156.5 1340.5,156.5 1344.5,165.0 1340.5,173.5 1190.5,173.5" fill="#000"/><polygon points="1344.5,165.0 1348.5,156.5 1419.5,156.5 1423.5,165.0 1419.5,173.5 1348.5,173.5" fill="#000"/><polygon points="1423.5,165.0 1427.5,156.5 1498.5,156.5 1502.5,165.0 1498.5,173.5 1427.5,173.5" fill="#000"/><polygon points="1502.5,165.0 1506.5,156.5 1524.5,156.5 1524.5,173.5 1506.5,173.5" fill="#000"/><polygon points="384.5,248.5 390.5,248.5 394.5,257.0 390.5,265.5 384.5,265.5" fill="#000"/><polygon points="394.5,257.0 398.5,248.5 403.5,248.5 407.5,257.0 403.5,265.5 398.5,265.5" fill="#000"/><polygon points="407.5,257.0 411.5,248.5 456.5,248.5 460.5,257.0 456.5,265.5 411.5,265.5" fill="#000"/><polygon points="460.5,257.0 464.5,248.5 535.5,248.5 539.5,257.0 535.5,265.5 464.5,265.5" fill="#000"/><polygon points="539.5,257.0 543.5,248.5 667.5,248.5 671.5,257.0 667.5,265.5 543.5,265.5" fill="#000"/><polygon points="671.5,257.0 675.5,248.5 680.5,248.5 684.5,257.0 680.5,265.5 675.5,265.5" fill="#000"/><polygon points="684.5,257.0 688.5,248.5 693.5,248.5 697.5,257.0 693.5,265.5 688.5,265.5" fill="#000"/><polygon points="697.5,257.0 701.5,248.5 740.5,248.5 744.5,257.0 740.5,265.5 701.5,265.5" fill="#000"/><polygon points="744.5,257.0 748.5,248.5 825.5,248.5 829.5,257.0 825.5,265.5 748.5,265.5" fill="#000"/><polygon points="829.5,257.0 833.5,248.5 904.5,248.5 908.5,257.0 904.5,265.5 833.5,265.5" fill="#000"/><polygon points="908.5,257.0 912.5,248.5 918.5,248.5 922.5,257.0 918.5,265.5 912.5,265.5" fill="#000"/><polygon points="922.5,257.0 926.5,248.5 931.5,248.5 935.5,257.0 931.5,265.5 926.5,265.5" fill="#000"/><polygon points="935.5,257.0 939.5,248.5 984.5,248.5 988.5,257.0 984.5,265.5 939.5,265.5" fill="#000"/><polygon points="988.5,257.0 992.5,248.5 1063.5,248.5 1067.5,257.0 1063.5,265.5 992.5,265.5" fill="#000"/><polygon points="1067.5,257.0 1071.5,248.5 1195.5,248.5 1199.5,257.0 1195.5,265.5 1071.5,265.5" fill="#000"/><polygon points="1199.5,257.0 1203.5,248.5 1208.5,248.5 1212.5,257.0 1208.5,265.5 1203.5,265.5" fill="#000"/><polygon points="1212.5,257.0 1216.5,248.5 1221.5,248.5 1225.5,257.0 1221.5,265.5 1216.5,265.5" fill="#000"/><polygon points="1225.5,257.0 1229.5,248.5 1268.5,248.5 1272.5,257.0 1268.5,265.5 1229.5,265.5" fill="#000"/><polygon points="1272.5,257.0 1276.5,248.5 1353.5,248.5 1357.5,257.0 1353.5,265.5 1276.5,265.5" fill="#000"/><polygon points="1357.5,257.0 1361.5,248.5 1432.5,248.5 1436.5,257.0 1432.5,265.5 1361.5,265.5" fill="#000"/><polygon points="1436.5,257.0 1440.5,248.5 1446.5,248.5 1450.5,257.0 1446.5,265.5 1440.5,265.5" fill="#000"/><polygon points="1450.5,257.0 1454.5,248.5 1459.5,248.5 1463.5,257.0 1459.5,265.5 1454.5,265.5" fill="#000"/><polygon points="1463.5,257.0 1467.5,248.5 1512.5,248.5 1516.5,257.0 1512.5,265.5 1467.5,265.5" fill="#000"/><polygon points="1516.5,257.0 1520.5,248.5 1524.5,248.5 1524.5,265.5 1520.5,265.5" fill="#000"/></g>
<g><rect x="384" y="156" width="59" height="1" fill="#00ff00"/><rect x="384" y="173" width="59" height="1" fill="#00ff00"/><rect x="450" y="156" width="73" height="1" fill="#00ff00"/><rect x="450" y="173" width="73" height="1" fill="#00ff00"/><rect x="530" y="156" width="125" height="1" fill="#00ff00"/><rect x="530" y="173" width="125" height="1" fill="#00ff00"/><rect x="662" y="156" width="151" height="1" fill="#00ff00"/><rect x="662" y="173" width="151" height="1" fill="#00ff00"/><rect x="820" y="156" width="72" height="1" fill="#00ff00"/><rect x="820" y="173" width="72" height="1" fill="#00ff00"/><rect x="899" y="156" width="72" height="1" fill="#00ff00"/><rect x="899" y="173" width="72" height="1" fill="#00ff00"/><rect x="978" y="156" width="73" height="1" fill="#00ff00"/><rect x="978" y="173" width="73" height="1" fill="#00ff00"/><rect x="1058" y="156" width="125" height="1" fill="#00ff00"/><rect x="1058" y="173" width="125" height="1" fill="#00ff00"/><rect x="1190" y="156" width="151" height="1" fill="#00ff00"/><rect x="1190" y="173" width="151" height="1" fill="#00ff00"/><rect x="1348" y="156" width="72" height="1" fill="#00ff00"/><rect x="1348" y="173" width="72" height="1" fill="#00ff00"/><rect x="1427" y="156" width="72" height="1" fill="#00ff00"/><rect x="1427" y="173" width="72" height="1" fill="#00ff00"/><rect x="1506" y="156" width="19" height="1" fill="#00ff00"/><rect x="1506" y="173" width="19" height="1" fill="#00ff00"/><path d="M442.5 156.5 L450.5 173.5 M442.5 173.5 L450.5 156.5" stroke="#00ff00" stroke-width="1.1" fill="none"/><rect x="446" y="156" width="1" height="18" fill="#00ff00"/><path d="M522.5 156.5 L530.5 173.5 M522.5 173.5 L530.5 156.5" stroke="#00ff00" stroke-width="1.1" fill="none"/><rect x="526" y="156" width="1" height="18" fill="#00ff00"/><path d="M654.5 156.5 L662.5 173.5 M654.5 173.5 L662.5 156.5" stroke="#00ff00" stroke-width="1.1" fill="none"/><rect x="658" y="156" width="1" height="18" fill="#00ff00"/><path d="M812.5 156.5 L820.5 173.5 M812.5 173.5 L820.5 156.5" stroke="#00ff00" stroke-width="1.1" fill="none"/><rect x="816" y="156" width="1" height="18" fill="#00ff00"/><path d="M891.5 156.5 L899.5 173.5 M891.5 173.5 L899.5 156.5" stroke="#00ff00" stroke-width="1.1" fill="none"/><rect x="895" y="156" width="1" height="18" fill="#00ff00"/><path d="M970.5 156.5 L978.5 173.5 M970.5 173.5 L978.5 156.5" stroke="#00ff00" stroke-width="1.1" fill="none"/><rect x="974" y="156" width="1" height="18" fill="#00ff00"/><path d="M1050.5 156.5 L1058.5 173.5 M1050.5 173.5 L1058.5 156.5" stroke="#00ff00" stroke-width="1.1" fill="none"/><rect x="1054" y="156" width="1" height="18" fill="#00ff00"/><path d="M1182.5 156.5 L1190.5 173.5 M1182.5 173.5 L1190.5 156.5" stroke="#00ff00" stroke-width="1.1" fill="none"/><rect x="1186" y="156" width="1" height="18" fill="#00ff00"/><path d="M1340.5 156.5 L1348.5 173.5 M1340.5 173.5 L1348.5 156.5" stroke="#00ff00" stroke-width="1.1" fill="none"/><rect x="1344" y="156" width="1" height="18" fill="#00ff00"/><path d="M1419.5 156.5 L1427.5 173.5 M1419.5 173.5 L1427.5 156.5" stroke="#00ff00" stroke-width="1.1" fill="none"/><rect x="1423" y="156" width="1" height="18" fill="#00ff00"/><path d="M1498.5 156.5 L1506.5 173.5 M1498.5 173.5 L1506.5 156.5" stroke="#00ff00" stroke-width="1.1" fill="none"/><rect x="1502" y="156" width="1" height="18" fill="#00ff00"/><rect x="405" y="196" width="57" height="1" fill="#00ff00"/><rect x="484" y="196" width="57" height="1" fill="#00ff00"/><rect x="563" y="196" width="110" height="1" fill="#00ff00"/><rect x="695" y="196" width="58" height="1" fill="#00ff00"/><rect x="774" y="196" width="58" height="1" fill="#00ff00"/><rect x="853" y="196" width="58" height="1" fill="#00ff00"/><rect x="933" y="196" width="57" height="1" fill="#00ff00"/><rect x="1012" y="196" width="57" height="1" fill="#00ff00"/><rect x="1091" y="196" width="110" height="1" fill="#00ff00"/><rect x="1223" y="196" width="58" height="1" fill="#00ff00"/><rect x="1302" y="196" width="58" height="1" fill="#00ff00"/><rect x="1381" y="196" width="58" height="1" fill="#00ff00"/><rect x="1461" y="196" width="57" height="1" fill="#00ff00"/><rect x="384" y="179" width="22" height="1" fill="#00ff00"/><rect x="405" y="179" width="1" height="18" fill="#00ff00"/><rect x="461" y="179" width="24" height="1" fill="#00ff00"/><rect x="461" y="179" width="1" height="18" fill="#00ff00"/><rect x="484" y="179" width="1" height="18" fill="#00ff00"/><rect x="540" y="179" width="24" height="1" fill="#00ff00"/><rect x="540" y="179" width="1" height="18" fill="#00ff00"/><rect x="563" y="179" width="1" height="18" fill="#00ff00"/><rect x="672" y="179" width="24" height="1" fill="#00ff00"/><rect x="672" y="179" width="1" height="18" fill="#00ff00"/><rect x="695" y="179" width="1" height="18" fill="#00ff00"/><rect x="752" y="179" width="23" height="1" fill="#00ff00"/><rect x="752" y="179" width="1" height="18" fill="#00ff00"/><rect x="774" y="179" width="1" height="18" fill="#00ff00"/><rect x="831" y="179" width="23" height="1" fill="#00ff00"/><rect x="831" y="179" width="1" height="18" fill="#00ff00"/><rect x="853" y="179" width="1" height="18" fill="#00ff00"/><rect x="910" y="179" width="24" height="1" fill="#00ff00"/><rect x="910" y="179" width="1" height="18" fill="#00ff00"/><rect x="933" y="179" width="1" height="18" fill="#00ff00"/><rect x="989" y="179" width="24" height="1" fill="#00ff00"/><rect x="989" y="179" width="1" height="18" fill="#00ff00"/><rect x="1012" y="179" width="1" height="18" fill="#00ff00"/><rect x="1068" y="179" width="24" height="1" fill="#00ff00"/><rect x="1068" y="179" width="1" height="18" fill="#00ff00"/><rect x="1091" y="179" width="1" height="18" fill="#00ff00"/><rect x="1200" y="179" width="24" height="1" fill="#00ff00"/><rect x="1200" y="179" width="1" height="18" fill="#00ff00"/><rect x="1223" y="179" width="1" height="18" fill="#00ff00"/><rect x="1280" y="179" width="23" height="1" fill="#00ff00"/><rect x="1280" y="179" width="1" height="18" fill="#00ff00"/><rect x="1302" y="179" width="1" height="18" fill="#00ff00"/><rect x="1359" y="179" width="23" height="1" fill="#00ff00"/><rect x="1359" y="179" width="1" height="18" fill="#00ff00"/><rect x="1381" y="179" width="1" height="18" fill="#00ff00"/><rect x="1438" y="179" width="24" height="1" fill="#00ff00"/><rect x="1438" y="179" width="1" height="18" fill="#00ff00"/><rect x="1461" y="179" width="1" height="18" fill="#00ff00"/><rect x="1517" y="179" width="8" height="1" fill="#00ff00"/><rect x="1517" y="179" width="1" height="18" fill="#00ff00"/><rect x="416" y="179" width="2" height="18" fill="#00ff00"/><rect x="416" y="202" width="2" height="18" fill="#00ff00"/><rect x="495" y="179" width="2" height="18" fill="#00ff00"/><rect x="495" y="202" width="2" height="18" fill="#00ff00"/><rect x="627" y="179" width="2" height="18" fill="#00ff00"/><rect x="627" y="202" width="2" height="18" fill="#00ff00"/><rect x="707" y="179" width="2" height="18" fill="#00ff00"/><rect x="707" y="202" width="2" height="18" fill="#00ff00"/><rect x="786" y="179" width="2" height="18" fill="#00ff00"/><rect x="786" y="202" width="2" height="18" fill="#00ff00"/><rect x="865" y="179" width="2" height="18" fill="#00ff00"/><rect x="865" y="202" width="2" height="18" fill="#00ff00"/><rect x="944" y="179" width="2" height="18" fill="#00ff00"/><rect x="944" y="202" width="2" height="18" fill="#00ff00"/><rect x="1023" y="179" width="2" height="18" fill="#00ff00"/><rect x="1023" y="202" width="2" height="18" fill="#00ff00"/><rect x="1155" y="179" width="2" height="18" fill="#00ff00"/><rect x="1155" y="202" width="2" height="18" fill="#00ff00"/><rect x="1235" y="179" width="2" height="18" fill="#00ff00"/><rect x="1235" y="202" width="2" height="18" fill="#00ff00"/><rect x="1314" y="179" width="2" height="18" fill="#00ff00"/><rect x="1314" y="202" width="2" height="18" fill="#00ff00"/><rect x="1393" y="179" width="2" height="18" fill="#00ff00"/><rect x="1393" y="202" width="2" height="18" fill="#00ff00"/><rect x="1472" y="179" width="2" height="18" fill="#00ff00"/><rect x="1472" y="202" width="2" height="18" fill="#00ff00"/><rect x="384" y="219" width="1141" height="1" fill="#00ff00"/><rect x="829" y="242" width="80" height="1" fill="#00ff00"/><rect x="1357" y="242" width="80" height="1" fill="#00ff00"/><rect x="384" y="225" width="446" height="1" fill="#00ff00"/><rect x="829" y="225" width="1" height="18" fill="#00ff00"/><rect x="908" y="225" width="450" height="1" fill="#00ff00"/><rect x="908" y="225" width="1" height="18" fill="#00ff00"/><rect x="1357" y="225" width="1" height="18" fill="#00ff00"/><rect x="1436" y="225" width="89" height="1" fill="#00ff00"/><rect x="1436" y="225" width="1" height="18" fill="#00ff00"/><rect x="384" y="248" width="7" height="1" fill="#00ff00"/><rect x="384" y="265" width="7" height="1" fill="#00ff00"/><rect x="398" y="248" width="6" height="1" fill="#00ff00"/><rect x="398" y="265" width="6" height="1" fill="#00ff00"/><rect x="411" y="248" width="46" height="1" fill="#00ff00"/><rect x="411" y="265" width="46" height="1" fill="#00ff00"/><rect x="464" y="248" width="72" height="1" fill="#00ff00"/><rect x="464" y="265" width="72" height="1" fill="#00ff00"/><rect x="543" y="248" width="125" height="1" fill="#00ff00"/><rect x="543" y="265" width="125" height="1" fill="#00ff00"/><rect x="675" y="248" width="6" height="1" fill="#00ff00"/><rect x="675" y="265" width="6" height="1" fill="#00ff00"/><rect x="688" y="248" width="6" height="1" fill="#00ff00"/><rect x="688" y="265" width="6" height="1" fill="#00ff00"/><rect x="701" y="248" width="40" height="1" fill="#00ff00"/><rect x="701" y="265" width="40" height="1" fill="#00ff00"/><rect x="748" y="248" width="78" height="1" fill="#00ff00"/><rect x="748" y="265" width="78" height="1" fill="#00ff00"/><rect x="833" y="248" width="72" height="1" fill="#00ff00"/><rect x="833" y="265" width="72" height="1" fill="#00ff00"/><rect x="912" y="248" width="7" height="1" fill="#00ff00"/><rect x="912" y="265" width="7" height="1" fill="#00ff00"/><rect x="926" y="248" width="6" height="1" fill="#00ff00"/><rect x="926" y="265" width="6" height="1" fill="#00ff00"/><rect x="939" y="248" width="46" height="1" fill="#00ff00"/><rect x="939" y="265" width="46" height="1" fill="#00ff00"/><rect x="992" y="248" width="72" height="1" fill="#00ff00"/><rect x="992" y="265" width="72" height="1" fill="#00ff00"/><rect x="1071" y="248" width="125" height="1" fill="#00ff00"/><rect x="1071" y="265" width="125" height="1" fill="#00ff00"/><rect x="1203" y="248" width="6" height="1" fill="#00ff00"/><rect x="1203" y="265" width="6" height="1" fill="#00ff00"/><rect x="1216" y="248" width="6" height="1" fill="#00ff00"/><rect x="1216" y="265" width="6" height="1" fill="#00ff00"/><rect x="1229" y="248" width="40" height="1" fill="#00ff00"/><rect x="1229" y="265" width="40" height="1" fill="#00ff00"/><rect x="1276" y="248" width="78" height="1" fill="#00ff00"/><rect x="1276" y="265" width="78" height="1" fill="#00ff00"/><rect x="1361" y="248" width="72" height="1" fill="#00ff00"/><rect x="1361" y="265" width="72" height="1" fill="#00ff00"/><rect x="1440" y="248" width="7" height="1" fill="#00ff00"/><rect x="1440" y="265" width="7" height="1" fill="#00ff00"/><rect x="1454" y="248" width="6" height="1" fill="#00ff00"/><rect x="1454" y="265" width="6" height="1" fill="#00ff00"/><rect x="1467" y="248" width="46" height="1" fill="#00ff00"/><rect x="1467" y="265" width="46" height="1" fill="#00ff00"/><rect x="1520" y="248" width="5" height="1" fill="#00ff00"/><rect x="1520" y="265" width="5" height="1" fill="#00ff00"/><path d="M390.5 248.5 L398.5 265.5 M390.5 265.5 L398.5 248.5" stroke="#00ff00" stroke-width="1.1" fill="none"/><path d="M403.5 248.5 L411.5 265.5 M403.5 265.5 L411.5 248.5" stroke="#00ff00" stroke-width="1.1" fill="none"/><path d="M456.5 248.5 L464.5 265.5 M456.5 265.5 L464.5 248.5" stroke="#00ff00" stroke-width="1.1" fill="none"/><path d="M535.5 248.5 L543.5 265.5 M535.5 265.5 L543.5 248.5" stroke="#00ff00" stroke-width="1.1" fill="none"/><path d="M667.5 248.5 L675.5 265.5 M667.5 265.5 L675.5 248.5" stroke="#00ff00" stroke-width="1.1" fill="none"/><path d="M680.5 248.5 L688.5 265.5 M680.5 265.5 L688.5 248.5" stroke="#00ff00" stroke-width="1.1" fill="none"/><path d="M693.5 248.5 L701.5 265.5 M693.5 265.5 L701.5 248.5" stroke="#00ff00" stroke-width="1.1" fill="none"/><path d="M740.5 248.5 L748.5 265.5 M740.5 265.5 L748.5 248.5" stroke="#00ff00" stroke-width="1.1" fill="none"/><path d="M825.5 248.5 L833.5 265.5 M825.5 265.5 L833.5 248.5" stroke="#00ff00" stroke-width="1.1" fill="none"/><path d="M904.5 248.5 L912.5 265.5 M904.5 265.5 L912.5 248.5" stroke="#00ff00" stroke-width="1.1" fill="none"/><path d="M918.5 248.5 L926.5 265.5 M918.5 265.5 L926.5 248.5" stroke="#00ff00" stroke-width="1.1" fill="none"/><path d="M931.5 248.5 L939.5 265.5 M931.5 265.5 L939.5 248.5" stroke="#00ff00" stroke-width="1.1" fill="none"/><path d="M984.5 248.5 L992.5 265.5 M984.5 265.5 L992.5 248.5" stroke="#00ff00" stroke-width="1.1" fill="none"/><path d="M1063.5 248.5 L1071.5 265.5 M1063.5 265.5 L1071.5 248.5" stroke="#00ff00" stroke-width="1.1" fill="none"/><path d="M1195.5 248.5 L1203.5 265.5 M1195.5 265.5 L1203.5 248.5" stroke="#00ff00" stroke-width="1.1" fill="none"/><path d="M1208.5 248.5 L1216.5 265.5 M1208.5 265.5 L1216.5 248.5" stroke="#00ff00" stroke-width="1.1" fill="none"/><path d="M1221.5 248.5 L1229.5 265.5 M1221.5 265.5 L1229.5 248.5" stroke="#00ff00" stroke-width="1.1" fill="none"/><path d="M1268.5 248.5 L1276.5 265.5 M1268.5 265.5 L1276.5 248.5" stroke="#00ff00" stroke-width="1.1" fill="none"/><path d="M1353.5 248.5 L1361.5 265.5 M1353.5 265.5 L1361.5 248.5" stroke="#00ff00" stroke-width="1.1" fill="none"/><path d="M1432.5 248.5 L1440.5 265.5 M1432.5 265.5 L1440.5 248.5" stroke="#00ff00" stroke-width="1.1" fill="none"/><path d="M1446.5 248.5 L1454.5 265.5 M1446.5 265.5 L1454.5 248.5" stroke="#00ff00" stroke-width="1.1" fill="none"/><path d="M1459.5 248.5 L1467.5 265.5 M1459.5 265.5 L1467.5 248.5" stroke="#00ff00" stroke-width="1.1" fill="none"/><path d="M1512.5 248.5 L1520.5 265.5 M1512.5 265.5 L1520.5 248.5" stroke="#00ff00" stroke-width="1.1" fill="none"/><rect x="384" y="288" width="57" height="1" fill="#00ff00"/><rect x="453" y="288" width="67" height="1" fill="#00ff00"/><rect x="532" y="288" width="120" height="1" fill="#00ff00"/><rect x="664" y="288" width="67" height="1" fill="#00ff00"/><rect x="743" y="288" width="67" height="1" fill="#00ff00"/><rect x="823" y="288" width="67" height="1" fill="#00ff00"/><rect x="902" y="288" width="67" height="1" fill="#00ff00"/><rect x="981" y="288" width="67" height="1" fill="#00ff00"/><rect x="1060" y="288" width="120" height="1" fill="#00ff00"/><rect x="1192" y="288" width="67" height="1" fill="#00ff00"/><rect x="1271" y="288" width="67" height="1" fill="#00ff00"/><rect x="1351" y="288" width="67" height="1" fill="#00ff00"/><rect x="1430" y="288" width="67" height="1" fill="#00ff00"/><rect x="1509" y="288" width="16" height="1" fill="#00ff00"/><rect x="440" y="271" width="14" height="1" fill="#00ff00"/><rect x="440" y="271" width="1" height="18" fill="#00ff00"/><rect x="453" y="271" width="1" height="18" fill="#00ff00"/><rect x="519" y="271" width="14" height="1" fill="#00ff00"/><rect x="519" y="271" width="1" height="18" fill="#00ff00"/><rect x="532" y="271" width="1" height="18" fill="#00ff00"/><rect x="651" y="271" width="14" height="1" fill="#00ff00"/><rect x="651" y="271" width="1" height="18" fill="#00ff00"/><rect x="664" y="271" width="1" height="18" fill="#00ff00"/><rect x="730" y="271" width="14" height="1" fill="#00ff00"/><rect x="730" y="271" width="1" height="18" fill="#00ff00"/><rect x="743" y="271" width="1" height="18" fill="#00ff00"/><rect x="809" y="271" width="15" height="1" fill="#00ff00"/><rect x="809" y="271" width="1" height="18" fill="#00ff00"/><rect x="823" y="271" width="1" height="18" fill="#00ff00"/><rect x="889" y="271" width="14" height="1" fill="#00ff00"/><rect x="889" y="271" width="1" height="18" fill="#00ff00"/><rect x="902" y="271" width="1" height="18" fill="#00ff00"/><rect x="968" y="271" width="14" height="1" fill="#00ff00"/><rect x="968" y="271" width="1" height="18" fill="#00ff00"/><rect x="981" y="271" width="1" height="18" fill="#00ff00"/><rect x="1047" y="271" width="14" height="1" fill="#00ff00"/><rect x="1047" y="271" width="1" height="18" fill="#00ff00"/><rect x="1060" y="271" width="1" height="18" fill="#00ff00"/><rect x="1179" y="271" width="14" height="1" fill="#00ff00"/><rect x="1179" y="271" width="1" height="18" fill="#00ff00"/><rect x="1192" y="271" width="1" height="18" fill="#00ff00"/><rect x="1258" y="271" width="14" height="1" fill="#00ff00"/><rect x="1258" y="271" width="1" height="18" fill="#00ff00"/><rect x="1271" y="271" width="1" height="18" fill="#00ff00"/><rect x="1337" y="271" width="15" height="1" fill="#00ff00"/><rect x="1337" y="271" width="1" height="18" fill="#00ff00"/><rect x="1351" y="271" width="1" height="18" fill="#00ff00"/><rect x="1417" y="271" width="14" height="1" fill="#00ff00"/><rect x="1417" y="271" width="1" height="18" fill="#00ff00"/><rect x="1430" y="271" width="1" height="18" fill="#00ff00"/><rect x="1496" y="271" width="14" height="1" fill="#00ff00"/><rect x="1496" y="271" width="1" height="18" fill="#00ff00"/><rect x="1509" y="271" width="1" height="18" fill="#00ff00"/><rect x="387" y="311" width="67" height="1" fill="#00ff00"/><rect x="466" y="311" width="67" height="1" fill="#00ff00"/><rect x="545" y="311" width="120" height="1" fill="#00ff00"/><rect x="677" y="311" width="67" height="1" fill="#00ff00"/><rect x="757" y="311" width="67" height="1" fill="#00ff00"/><rect x="836" y="311" width="67" height="1" fill="#00ff00"/><rect x="915" y="311" width="67" height="1" fill="#00ff00"/><rect x="994" y="311" width="67" height="1" fill="#00ff00"/><rect x="1073" y="311" width="120" height="1" fill="#00ff00"/><rect x="1205" y="311" width="67" height="1" fill="#00ff00"/><rect x="1285" y="311" width="67" height="1" fill="#00ff00"/><rect x="1364" y="311" width="67" height="1" fill="#00ff00"/><rect x="1443" y="311" width="67" height="1" fill="#00ff00"/><rect x="1522" y="311" width="3" height="1" fill="#00ff00"/><rect x="384" y="294" width="4" height="1" fill="#00ff00"/><rect x="387" y="294" width="1" height="18" fill="#00ff00"/><rect x="453" y="294" width="14" height="1" fill="#00ff00"/><rect x="453" y="294" width="1" height="18" fill="#00ff00"/><rect x="466" y="294" width="1" height="18" fill="#00ff00"/><rect x="532" y="294" width="14" height="1" fill="#00ff00"/><rect x="532" y="294" width="1" height="18" fill="#00ff00"/><rect x="545" y="294" width="1" height="18" fill="#00ff00"/><rect x="664" y="294" width="14" height="1" fill="#00ff00"/><rect x="664" y="294" width="1" height="18" fill="#00ff00"/><rect x="677" y="294" width="1" height="18" fill="#00ff00"/><rect x="743" y="294" width="15" height="1" fill="#00ff00"/><rect x="743" y="294" width="1" height="18" fill="#00ff00"/><rect x="757" y="294" width="1" height="18" fill="#00ff00"/><rect x="823" y="294" width="14" height="1" fill="#00ff00"/><rect x="823" y="294" width="1" height="18" fill="#00ff00"/><rect x="836" y="294" width="1" height="18" fill="#00ff00"/><rect x="902" y="294" width="14" height="1" fill="#00ff00"/><rect x="902" y="294" width="1" height="18" fill="#00ff00"/><rect x="915" y="294" width="1" height="18" fill="#00ff00"/><rect x="981" y="294" width="14" height="1" fill="#00ff00"/><rect x="981" y="294" width="1" height="18" fill="#00ff00"/><rect x="994" y="294" width="1" height="18" fill="#00ff00"/><rect x="1060" y="294" width="14" height="1" fill="#00ff00"/><rect x="1060" y="294" width="1" height="18" fill="#00ff00"/><rect x="1073" y="294" width="1" height="18" fill="#00ff00"/><rect x="1192" y="294" width="14" height="1" fill="#00ff00"/><rect x="1192" y="294" width="1" height="18" fill="#00ff00"/><rect x="1205" y="294" width="1" height="18" fill="#00ff00"/><rect x="1271" y="294" width="15" height="1" fill="#00ff00"/><rect x="1271" y="294" width="1" height="18" fill="#00ff00"/><rect x="1285" y="294" width="1" height="18" fill="#00ff00"/><rect x="1351" y="294" width="14" height="1" fill="#00ff00"/><rect x="1351" y="294" width="1" height="18" fill="#00ff00"/><rect x="1364" y="294" width="1" height="18" fill="#00ff00"/><rect x="1430" y="294" width="14" height="1" fill="#00ff00"/><rect x="1430" y="294" width="1" height="18" fill="#00ff00"/><rect x="1443" y="294" width="1" height="18" fill="#00ff00"/><rect x="1509" y="294" width="14" height="1" fill="#00ff00"/><rect x="1509" y="294" width="1" height="18" fill="#00ff00"/><rect x="1522" y="294" width="1" height="18" fill="#00ff00"/><rect x="384" y="334" width="4" height="1" fill="#00ff00"/><rect x="400" y="334" width="67" height="1" fill="#00ff00"/><rect x="479" y="334" width="67" height="1" fill="#00ff00"/><rect x="559" y="334" width="119" height="1" fill="#00ff00"/><rect x="691" y="334" width="67" height="1" fill="#00ff00"/><rect x="770" y="334" width="67" height="1" fill="#00ff00"/><rect x="849" y="334" width="67" height="1" fill="#00ff00"/><rect x="928" y="334" width="67" height="1" fill="#00ff00"/><rect x="1007" y="334" width="67" height="1" fill="#00ff00"/><rect x="1087" y="334" width="119" height="1" fill="#00ff00"/><rect x="1219" y="334" width="67" height="1" fill="#00ff00"/><rect x="1298" y="334" width="67" height="1" fill="#00ff00"/><rect x="1377" y="334" width="67" height="1" fill="#00ff00"/><rect x="1456" y="334" width="67" height="1" fill="#00ff00"/><rect x="387" y="317" width="14" height="1" fill="#00ff00"/><rect x="387" y="317" width="1" height="18" fill="#00ff00"/><rect x="400" y="317" width="1" height="18" fill="#00ff00"/><rect x="466" y="317" width="14" height="1" fill="#00ff00"/><rect x="466" y="317" width="1" height="18" fill="#00ff00"/><rect x="479" y="317" width="1" height="18" fill="#00ff00"/><rect x="545" y="317" width="15" height="1" fill="#00ff00"/><rect x="545" y="317" width="1" height="18" fill="#00ff00"/><rect x="559" y="317" width="1" height="18" fill="#00ff00"/><rect x="677" y="317" width="15" height="1" fill="#00ff00"/><rect x="677" y="317" width="1" height="18" fill="#00ff00"/><rect x="691" y="317" width="1" height="18" fill="#00ff00"/><rect x="757" y="317" width="14" height="1" fill="#00ff00"/><rect x="757" y="317" width="1" height="18" fill="#00ff00"/><rect x="770" y="317" width="1" height="18" fill="#00ff00"/><rect x="836" y="317" width="14" height="1" fill="#00ff00"/><rect x="836" y="317" width="1" height="18" fill="#00ff00"/><rect x="849" y="317" width="1" height="18" fill="#00ff00"/><rect x="915" y="317" width="14" height="1" fill="#00ff00"/><rect x="915" y="317" width="1" height="18" fill="#00ff00"/><rect x="928" y="317" width="1" height="18" fill="#00ff00"/><rect x="994" y="317" width="14" height="1" fill="#00ff00"/><rect x="994" y="317" width="1" height="18" fill="#00ff00"/><rect x="1007" y="317" width="1" height="18" fill="#00ff00"/><rect x="1073" y="317" width="15" height="1" fill="#00ff00"/><rect x="1073" y="317" width="1" height="18" fill="#00ff00"/><rect x="1087" y="317" width="1" height="18" fill="#00ff00"/><rect x="1205" y="317" width="15" height="1" fill="#00ff00"/><rect x="1205" y="317" width="1" height="18" fill="#00ff00"/><rect x="1219" y="317" width="1" height="18" fill="#00ff00"/><rect x="1285" y="317" width="14" height="1" fill="#00ff00"/><rect x="1285" y="317" width="1" height="18" fill="#00ff00"/><rect x="1298" y="317" width="1" height="18" fill="#00ff00"/><rect x="1364" y="317" width="14" height="1" fill="#00ff00"/><rect x="1364" y="317" width="1" height="18" fill="#00ff00"/><rect x="1377" y="317" width="1" height="18" fill="#00ff00"/><rect x="1443" y="317" width="14" height="1" fill="#00ff00"/><rect x="1443" y="317" width="1" height="18" fill="#00ff00"/><rect x="1456" y="317" width="1" height="18" fill="#00ff00"/><rect x="1522" y="317" width="3" height="1" fill="#00ff00"/><rect x="1522" y="317" width="1" height="18" fill="#00ff00"/><rect x="384" y="357" width="17" height="1" fill="#00ff00"/><rect x="413" y="357" width="67" height="1" fill="#00ff00"/><rect x="493" y="357" width="67" height="1" fill="#00ff00"/><rect x="572" y="357" width="120" height="1" fill="#00ff00"/><rect x="704" y="357" width="67" height="1" fill="#00ff00"/><rect x="783" y="357" width="67" height="1" fill="#00ff00"/><rect x="862" y="357" width="67" height="1" fill="#00ff00"/><rect x="941" y="357" width="67" height="1" fill="#00ff00"/><rect x="1021" y="357" width="67" height="1" fill="#00ff00"/><rect x="1100" y="357" width="120" height="1" fill="#00ff00"/><rect x="1232" y="357" width="67" height="1" fill="#00ff00"/><rect x="1311" y="357" width="67" height="1" fill="#00ff00"/><rect x="1390" y="357" width="67" height="1" fill="#00ff00"/><rect x="1469" y="357" width="56" height="1" fill="#00ff00"/><rect x="400" y="340" width="14" height="1" fill="#00ff00"/><rect x="400" y="340" width="1" height="18" fill="#00ff00"/><rect x="413" y="340" width="1" height="18" fill="#00ff00"/><rect x="479" y="340" width="15" height="1" fill="#00ff00"/><rect x="479" y="340" width="1" height="18" fill="#00ff00"/><rect x="493" y="340" width="1" height="18" fill="#00ff00"/><rect x="559" y="340" width="14" height="1" fill="#00ff00"/><rect x="559" y="340" width="1" height="18" fill="#00ff00"/><rect x="572" y="340" width="1" height="18" fill="#00ff00"/><rect x="691" y="340" width="14" height="1" fill="#00ff00"/><rect x="691" y="340" width="1" height="18" fill="#00ff00"/><rect x="704" y="340" width="1" height="18" fill="#00ff00"/><rect x="770" y="340" width="14" height="1" fill="#00ff00"/><rect x="770" y="340" width="1" height="18" fill="#00ff00"/><rect x="783" y="340" width="1" height="18" fill="#00ff00"/><rect x="849" y="340" width="14" height="1" fill="#00ff00"/><rect x="849" y="340" width="1" height="18" fill="#00ff00"/><rect x="862" y="340" width="1" height="18" fill="#00ff00"/><rect x="928" y="340" width="14" height="1" fill="#00ff00"/><rect x="928" y="340" width="1" height="18" fill="#00ff00"/><rect x="941" y="340" width="1" height="18" fill="#00ff00"/><rect x="1007" y="340" width="15" height="1" fill="#00ff00"/><rect x="1007" y="340" width="1" height="18" fill="#00ff00"/><rect x="1021" y="340" width="1" height="18" fill="#00ff00"/><rect x="1087" y="340" width="14" height="1" fill="#00ff00"/><rect x="1087" y="340" width="1" height="18" fill="#00ff00"/><rect x="1100" y="340" width="1" height="18" fill="#00ff00"/><rect x="1219" y="340" width="14" height="1" fill="#00ff00"/><rect x="1219" y="340" width="1" height="18" fill="#00ff00"/><rect x="1232" y="340" width="1" height="18" fill="#00ff00"/><rect x="1298" y="340" width="14" height="1" fill="#00ff00"/><rect x="1298" y="340" width="1" height="18" fill="#00ff00"/><rect x="1311" y="340" width="1" height="18" fill="#00ff00"/><rect x="1377" y="340" width="14" height="1" fill="#00ff00"/><rect x="1377" y="340" width="1" height="18" fill="#00ff00"/><rect x="1390" y="340" width="1" height="18" fill="#00ff00"/><rect x="1456" y="340" width="14" height="1" fill="#00ff00"/><rect x="1456" y="340" width="1" height="18" fill="#00ff00"/><rect x="1469" y="340" width="1" height="18" fill="#00ff00"/><rect x="384" y="380" width="30" height="1" fill="#00ff00"/><rect x="427" y="380" width="67" height="1" fill="#00ff00"/><rect x="506" y="380" width="67" height="1" fill="#00ff00"/><rect x="585" y="380" width="120" height="1" fill="#00ff00"/><rect x="717" y="380" width="67" height="1" fill="#00ff00"/><rect x="796" y="380" width="67" height="1" fill="#00ff00"/><rect x="875" y="380" width="67" height="1" fill="#00ff00"/><rect x="955" y="380" width="67" height="1" fill="#00ff00"/><rect x="1034" y="380" width="67" height="1" fill="#00ff00"/><rect x="1113" y="380" width="120" height="1" fill="#00ff00"/><rect x="1245" y="380" width="67" height="1" fill="#00ff00"/><rect x="1324" y="380" width="67" height="1" fill="#00ff00"/><rect x="1403" y="380" width="67" height="1" fill="#00ff00"/><rect x="1483" y="380" width="42" height="1" fill="#00ff00"/><rect x="413" y="363" width="15" height="1" fill="#00ff00"/><rect x="413" y="363" width="1" height="18" fill="#00ff00"/><rect x="427" y="363" width="1" height="18" fill="#00ff00"/><rect x="493" y="363" width="14" height="1" fill="#00ff00"/><rect x="493" y="363" width="1" height="18" fill="#00ff00"/><rect x="506" y="363" width="1" height="18" fill="#00ff00"/><rect x="572" y="363" width="14" height="1" fill="#00ff00"/><rect x="572" y="363" width="1" height="18" fill="#00ff00"/><rect x="585" y="363" width="1" height="18" fill="#00ff00"/><rect x="704" y="363" width="14" height="1" fill="#00ff00"/><rect x="704" y="363" width="1" height="18" fill="#00ff00"/><rect x="717" y="363" width="1" height="18" fill="#00ff00"/><rect x="783" y="363" width="14" height="1" fill="#00ff00"/><rect x="783" y="363" width="1" height="18" fill="#00ff00"/><rect x="796" y="363" width="1" height="18" fill="#00ff00"/><rect x="862" y="363" width="14" height="1" fill="#00ff00"/><rect x="862" y="363" width="1" height="18" fill="#00ff00"/><rect x="875" y="363" width="1" height="18" fill="#00ff00"/><rect x="941" y="363" width="15" height="1" fill="#00ff00"/><rect x="941" y="363" width="1" height="18" fill="#00ff00"/><rect x="955" y="363" width="1" height="18" fill="#00ff00"/><rect x="1021" y="363" width="14" height="1" fill="#00ff00"/><rect x="1021" y="363" width="1" height="18" fill="#00ff00"/><rect x="1034" y="363" width="1" height="18" fill="#00ff00"/><rect x="1100" y="363" width="14" height="1" fill="#00ff00"/><rect x="1100" y="363" width="1" height="18" fill="#00ff00"/><rect x="1113" y="363" width="1" height="18" fill="#00ff00"/><rect x="1232" y="363" width="14" height="1" fill="#00ff00"/><rect x="1232" y="363" width="1" height="18" fill="#00ff00"/><rect x="1245" y="363" width="1" height="18" fill="#00ff00"/><rect x="1311" y="363" width="14" height="1" fill="#00ff00"/><rect x="1311" y="363" width="1" height="18" fill="#00ff00"/><rect x="1324" y="363" width="1" height="18" fill="#00ff00"/><rect x="1390" y="363" width="14" height="1" fill="#00ff00"/><rect x="1390" y="363" width="1" height="18" fill="#00ff00"/><rect x="1403" y="363" width="1" height="18" fill="#00ff00"/><rect x="1469" y="363" width="15" height="1" fill="#00ff00"/><rect x="1469" y="363" width="1" height="18" fill="#00ff00"/><rect x="1483" y="363" width="1" height="18" fill="#00ff00"/><rect x="384" y="403" width="44" height="1" fill="#00ff00"/><rect x="440" y="403" width="67" height="1" fill="#00ff00"/><rect x="519" y="403" width="67" height="1" fill="#00ff00"/><rect x="598" y="403" width="120" height="1" fill="#00ff00"/><rect x="730" y="403" width="67" height="1" fill="#00ff00"/><rect x="809" y="403" width="67" height="1" fill="#00ff00"/><rect x="889" y="403" width="67" height="1" fill="#00ff00"/><rect x="968" y="403" width="67" height="1" fill="#00ff00"/><rect x="1047" y="403" width="67" height="1" fill="#00ff00"/><rect x="1126" y="403" width="120" height="1" fill="#00ff00"/><rect x="1258" y="403" width="67" height="1" fill="#00ff00"/><rect x="1337" y="403" width="67" height="1" fill="#00ff00"/><rect x="1417" y="403" width="67" height="1" fill="#00ff00"/><rect x="1496" y="403" width="29" height="1" fill="#00ff00"/><rect x="427" y="386" width="14" height="1" fill="#00ff00"/><rect x="427" y="386" width="1" height="18" fill="#00ff00"/><rect x="440" y="386" width="1" height="18" fill="#00ff00"/><rect x="506" y="386" width="14" height="1" fill="#00ff00"/><rect x="506" y="386" width="1" height="18" fill="#00ff00"/><rect x="519" y="386" width="1" height="18" fill="#00ff00"/><rect x="585" y="386" width="14" height="1" fill="#00ff00"/><rect x="585" y="386" width="1" height="18" fill="#00ff00"/><rect x="598" y="386" width="1" height="18" fill="#00ff00"/><rect x="717" y="386" width="14" height="1" fill="#00ff00"/><rect x="717" y="386" width="1" height="18" fill="#00ff00"/><rect x="730" y="386" width="1" height="18" fill="#00ff00"/><rect x="796" y="386" width="14" height="1" fill="#00ff00"/><rect x="796" y="386" width="1" height="18" fill="#00ff00"/><rect x="809" y="386" width="1" height="18" fill="#00ff00"/><rect x="875" y="386" width="15" height="1" fill="#00ff00"/><rect x="875" y="386" width="1" height="18" fill="#00ff00"/><rect x="889" y="386" width="1" height="18" fill="#00ff00"/><rect x="955" y="386" width="14" height="1" fill="#00ff00"/><rect x="955" y="386" width="1" height="18" fill="#00ff00"/><rect x="968" y="386" width="1" height="18" fill="#00ff00"/><rect x="1034" y="386" width="14" height="1" fill="#00ff00"/><rect x="1034" y="386" width="1" height="18" fill="#00ff00"/><rect x="1047" y="386" width="1" height="18" fill="#00ff00"/><rect x="1113" y="386" width="14" height="1" fill="#00ff00"/><rect x="1113" y="386" width="1" height="18" fill="#00ff00"/><rect x="1126" y="386" width="1" height="18" fill="#00ff00"/><rect x="1245" y="386" width="14" height="1" fill="#00ff00"/><rect x="1245" y="386" width="1" height="18" fill="#00ff00"/><rect x="1258" y="386" width="1" height="18" fill="#00ff00"/><rect x="1324" y="386" width="14" height="1" fill="#00ff00"/><rect x="1324" y="386" width="1" height="18" fill="#00ff00"/><rect x="1337" y="386" width="1" height="18" fill="#00ff00"/><rect x="1403" y="386" width="15" height="1" fill="#00ff00"/><rect x="1403" y="386" width="1" height="18" fill="#00ff00"/><rect x="1417" y="386" width="1" height="18" fill="#00ff00"/><rect x="1483" y="386" width="14" height="1" fill="#00ff00"/><rect x="1483" y="386" width="1" height="18" fill="#00ff00"/><rect x="1496" y="386" width="1" height="18" fill="#00ff00"/><rect x="384" y="426" width="215" height="1" fill="#00ff00"/><rect x="611" y="426" width="516" height="1" fill="#00ff00"/><rect x="1139" y="426" width="386" height="1" fill="#00ff00"/><rect x="598" y="409" width="14" height="1" fill="#00ff00"/><rect x="598" y="409" width="1" height="18" fill="#00ff00"/><rect x="611" y="409" width="1" height="18" fill="#00ff00"/><rect x="1126" y="409" width="14" height="1" fill="#00ff00"/><rect x="1126" y="409" width="1" height="18" fill="#00ff00"/><rect x="1139" y="409" width="1" height="18" fill="#00ff00"/><rect x="384" y="449" width="228" height="1" fill="#00ff00"/><rect x="625" y="449" width="515" height="1" fill="#00ff00"/><rect x="1153" y="449" width="372" height="1" fill="#00ff00"/><rect x="611" y="432" width="15" height="1" fill="#00ff00"/><rect x="611" y="432" width="1" height="18" fill="#00ff00"/><rect x="625" y="432" width="1" height="18" fill="#00ff00"/><rect x="1139" y="432" width="15" height="1" fill="#00ff00"/><rect x="1139" y="432" width="1" height="18" fill="#00ff00"/><rect x="1153" y="432" width="1" height="18" fill="#00ff00"/><rect x="384" y="472" width="242" height="1" fill="#00ff00"/><rect x="638" y="472" width="516" height="1" fill="#00ff00"/><rect x="1166" y="472" width="359" height="1" fill="#00ff00"/><rect x="625" y="455" width="14" height="1" fill="#00ff00"/><rect x="625" y="455" width="1" height="18" fill="#00ff00"/><rect x="638" y="455" width="1" height="18" fill="#00ff00"/><rect x="1153" y="455" width="14" height="1" fill="#00ff00"/><rect x="1153" y="455" width="1" height="18" fill="#00ff00"/><rect x="1166" y="455" width="1" height="18" fill="#00ff00"/><rect x="384" y="495" width="255" height="1" fill="#00ff00"/><rect x="651" y="495" width="516" height="1" fill="#00ff00"/><rect x="1179" y="495" width="346" height="1" fill="#00ff00"/><rect x="638" y="478" width="14" height="1" fill="#00ff00"/><rect x="638" y="478" width="1" height="18" fill="#00ff00"/><rect x="651" y="478" width="1" height="18" fill="#00ff00"/><rect x="1166" y="478" width="14" height="1" fill="#00ff00"/><rect x="1166" y="478" width="1" height="18" fill="#00ff00"/><rect x="1179" y="478" width="1" height="18" fill="#00ff00"/><rect x="384" y="501" width="1141" height="1" fill="#00ff00"/><rect x="384" y="540" width="181" height="2" fill="#00ff00"/><rect x="696" y="540" width="829" height="2" fill="#00ff00"/><rect x="564" y="524" width="133" height="2" fill="#00ff00"/><rect x="564" y="524" width="2" height="18" fill="#00ff00"/><rect x="696" y="524" width="2" height="18" fill="#00ff00"/><rect x="384" y="547" width="1141" height="1" fill="#00ff00"/><rect x="384" y="587" width="1141" height="1" fill="#00ff00"/><rect x="384" y="593" width="1141" height="1" fill="#00ff00"/><rect x="384" y="616" width="1141" height="1" fill="#00ff00"/><rect x="384" y="616" width="1" height="18" fill="#00ff00"/><rect x="385" y="616" width="1" height="18" fill="#00ff00"/><rect x="384" y="639" width="1141" height="1" fill="#00ff00"/><rect x="384" y="679" width="44" height="1" fill="#00ff00"/><rect x="440" y="679" width="67" height="1" fill="#00ff00"/><rect x="519" y="679" width="120" height="1" fill="#00ff00"/><rect x="651" y="679" width="67" height="1" fill="#00ff00"/><rect x="730" y="679" width="67" height="1" fill="#00ff00"/><rect x="809" y="679" width="67" height="1" fill="#00ff00"/><rect x="889" y="679" width="67" height="1" fill="#00ff00"/><rect x="968" y="679" width="67" height="1" fill="#00ff00"/><rect x="1047" y="679" width="120" height="1" fill="#00ff00"/><rect x="1179" y="679" width="67" height="1" fill="#00ff00"/><rect x="1258" y="679" width="67" height="1" fill="#00ff00"/><rect x="1337" y="679" width="67" height="1" fill="#00ff00"/><rect x="1417" y="679" width="67" height="1" fill="#00ff00"/><rect x="1496" y="679" width="29" height="1" fill="#00ff00"/><rect x="427" y="662" width="14" height="1" fill="#00ff00"/><rect x="427" y="662" width="1" height="18" fill="#00ff00"/><rect x="440" y="662" width="1" height="18" fill="#00ff00"/><rect x="506" y="662" width="14" height="1" fill="#00ff00"/><rect x="506" y="662" width="1" height="18" fill="#00ff00"/><rect x="519" y="662" width="1" height="18" fill="#00ff00"/><rect x="638" y="662" width="14" height="1" fill="#00ff00"/><rect x="638" y="662" width="1" height="18" fill="#00ff00"/><rect x="651" y="662" width="1" height="18" fill="#00ff00"/><rect x="717" y="662" width="14" height="1" fill="#00ff00"/><rect x="717" y="662" width="1" height="18" fill="#00ff00"/><rect x="730" y="662" width="1" height="18" fill="#00ff00"/><rect x="796" y="662" width="14" height="1" fill="#00ff00"/><rect x="796" y="662" width="1" height="18" fill="#00ff00"/><rect x="809" y="662" width="1" height="18" fill="#00ff00"/><rect x="875" y="662" width="15" height="1" fill="#00ff00"/><rect x="875" y="662" width="1" height="18" fill="#00ff00"/><rect x="889" y="662" width="1" height="18" fill="#00ff00"/><rect x="955" y="662" width="14" height="1" fill="#00ff00"/><rect x="955" y="662" width="1" height="18" fill="#00ff00"/><rect x="968" y="662" width="1" height="18" fill="#00ff00"/><rect x="1034" y="662" width="14" height="1" fill="#00ff00"/><rect x="1034" y="662" width="1" height="18" fill="#00ff00"/><rect x="1047" y="662" width="1" height="18" fill="#00ff00"/><rect x="1166" y="662" width="14" height="1" fill="#00ff00"/><rect x="1166" y="662" width="1" height="18" fill="#00ff00"/><rect x="1179" y="662" width="1" height="18" fill="#00ff00"/><rect x="1245" y="662" width="14" height="1" fill="#00ff00"/><rect x="1245" y="662" width="1" height="18" fill="#00ff00"/><rect x="1258" y="662" width="1" height="18" fill="#00ff00"/><rect x="1324" y="662" width="14" height="1" fill="#00ff00"/><rect x="1324" y="662" width="1" height="18" fill="#00ff00"/><rect x="1337" y="662" width="1" height="18" fill="#00ff00"/><rect x="1403" y="662" width="15" height="1" fill="#00ff00"/><rect x="1403" y="662" width="1" height="18" fill="#00ff00"/><rect x="1417" y="662" width="1" height="18" fill="#00ff00"/><rect x="1483" y="662" width="14" height="1" fill="#00ff00"/><rect x="1483" y="662" width="1" height="18" fill="#00ff00"/><rect x="1496" y="662" width="1" height="18" fill="#00ff00"/><rect x="384" y="702" width="44" height="1" fill="#00ff00"/><rect x="440" y="702" width="67" height="1" fill="#00ff00"/><rect x="519" y="702" width="120" height="1" fill="#00ff00"/><rect x="651" y="702" width="67" height="1" fill="#00ff00"/><rect x="730" y="702" width="67" height="1" fill="#00ff00"/><rect x="809" y="702" width="67" height="1" fill="#00ff00"/><rect x="889" y="702" width="67" height="1" fill="#00ff00"/><rect x="968" y="702" width="67" height="1" fill="#00ff00"/><rect x="1047" y="702" width="120" height="1" fill="#00ff00"/><rect x="1179" y="702" width="67" height="1" fill="#00ff00"/><rect x="1258" y="702" width="67" height="1" fill="#00ff00"/><rect x="1337" y="702" width="67" height="1" fill="#00ff00"/><rect x="1417" y="702" width="67" height="1" fill="#00ff00"/><rect x="1496" y="702" width="29" height="1" fill="#00ff00"/><rect x="427" y="685" width="14" height="1" fill="#00ff00"/><rect x="427" y="685" width="1" height="18" fill="#00ff00"/><rect x="440" y="685" width="1" height="18" fill="#00ff00"/><rect x="506" y="685" width="14" height="1" fill="#00ff00"/><rect x="506" y="685" width="1" height="18" fill="#00ff00"/><rect x="519" y="685" width="1" height="18" fill="#00ff00"/><rect x="638" y="685" width="14" height="1" fill="#00ff00"/><rect x="638" y="685" width="1" height="18" fill="#00ff00"/><rect x="651" y="685" width="1" height="18" fill="#00ff00"/><rect x="717" y="685" width="14" height="1" fill="#00ff00"/><rect x="717" y="685" width="1" height="18" fill="#00ff00"/><rect x="730" y="685" width="1" height="18" fill="#00ff00"/><rect x="796" y="685" width="14" height="1" fill="#00ff00"/><rect x="796" y="685" width="1" height="18" fill="#00ff00"/><rect x="809" y="685" width="1" height="18" fill="#00ff00"/><rect x="875" y="685" width="15" height="1" fill="#00ff00"/><rect x="875" y="685" width="1" height="18" fill="#00ff00"/><rect x="889" y="685" width="1" height="18" fill="#00ff00"/><rect x="955" y="685" width="14" height="1" fill="#00ff00"/><rect x="955" y="685" width="1" height="18" fill="#00ff00"/><rect x="968" y="685" width="1" height="18" fill="#00ff00"/><rect x="1034" y="685" width="14" height="1" fill="#00ff00"/><rect x="1034" y="685" width="1" height="18" fill="#00ff00"/><rect x="1047" y="685" width="1" height="18" fill="#00ff00"/><rect x="1166" y="685" width="14" height="1" fill="#00ff00"/><rect x="1166" y="685" width="1" height="18" fill="#00ff00"/><rect x="1179" y="685" width="1" height="18" fill="#00ff00"/><rect x="1245" y="685" width="14" height="1" fill="#00ff00"/><rect x="1245" y="685" width="1" height="18" fill="#00ff00"/><rect x="1258" y="685" width="1" height="18" fill="#00ff00"/><rect x="1324" y="685" width="14" height="1" fill="#00ff00"/><rect x="1324" y="685" width="1" height="18" fill="#00ff00"/><rect x="1337" y="685" width="1" height="18" fill="#00ff00"/><rect x="1403" y="685" width="15" height="1" fill="#00ff00"/><rect x="1403" y="685" width="1" height="18" fill="#00ff00"/><rect x="1417" y="685" width="1" height="18" fill="#00ff00"/><rect x="1483" y="685" width="14" height="1" fill="#00ff00"/><rect x="1483" y="685" width="1" height="18" fill="#00ff00"/><rect x="1496" y="685" width="1" height="18" fill="#00ff00"/><rect x="384" y="725" width="374" height="1" fill="#00ff00"/><rect x="823" y="725" width="463" height="1" fill="#00ff00"/><rect x="1351" y="725" width="174" height="1" fill="#00ff00"/><rect x="757" y="708" width="67" height="1" fill="#00ff00"/><rect x="757" y="708" width="1" height="18" fill="#00ff00"/><rect x="823" y="708" width="1" height="18" fill="#00ff00"/><rect x="1285" y="708" width="67" height="1" fill="#00ff00"/><rect x="1285" y="708" width="1" height="18" fill="#00ff00"/><rect x="1351" y="708" width="1" height="18" fill="#00ff00"/><rect x="460" y="731" width="370" height="1" fill="#00ff00"/><rect x="460" y="731" width="1" height="10" fill="#00ff00"/><rect x="829" y="731" width="1" height="10" fill="#00ff00"/><rect x="988" y="731" width="370" height="1" fill="#00ff00"/><rect x="988" y="731" width="1" height="10" fill="#00ff00"/><rect x="1357" y="731" width="1" height="10" fill="#00ff00"/></g>
<g><rect x="384" y="152" width="1141" height="1" fill="#fff"/><rect x="393" y="148" width="1" height="4" fill="#fff"/><rect x="413" y="140" width="1" height="12" fill="#fff"/><rect x="433" y="148" width="1" height="4" fill="#fff"/><rect x="453" y="148" width="1" height="4" fill="#fff"/><rect x="473" y="148" width="1" height="4" fill="#fff"/><rect x="493" y="148" width="1" height="4" fill="#fff"/><rect x="513" y="136" width="1" height="16" fill="#fff"/><rect x="533" y="148" width="1" height="4" fill="#fff"/><rect x="553" y="148" width="1" height="4" fill="#fff"/><rect x="573" y="148" width="1" height="4" fill="#fff"/><rect x="593" y="148" width="1" height="4" fill="#fff"/><rect x="613" y="147" width="1" height="5" fill="#fff"/><rect x="633" y="148" width="1" height="4" fill="#fff"/><rect x="653" y="148" width="1" height="4" fill="#fff"/><rect x="673" y="148" width="1" height="4" fill="#fff"/><rect x="693" y="148" width="1" height="4" fill="#fff"/><rect x="713" y="136" width="1" height="16" fill="#fff"/><rect x="733" y="148" width="1" height="4" fill="#fff"/><rect x="753" y="148" width="1" height="4" fill="#fff"/><rect x="773" y="148" width="1" height="4" fill="#fff"/><rect x="793" y="148" width="1" height="4" fill="#fff"/><rect x="813" y="147" width="1" height="5" fill="#fff"/><rect x="833" y="148" width="1" height="4" fill="#fff"/><rect x="853" y="148" width="1" height="4" fill="#fff"/><rect x="873" y="148" width="1" height="4" fill="#fff"/><rect x="893" y="148" width="1" height="4" fill="#fff"/><rect x="913" y="136" width="1" height="16" fill="#fff"/><rect x="933" y="148" width="1" height="4" fill="#fff"/><rect x="953" y="148" width="1" height="4" fill="#fff"/><rect x="973" y="148" width="1" height="4" fill="#fff"/><rect x="993" y="148" width="1" height="4" fill="#fff"/><rect x="1013" y="147" width="1" height="5" fill="#fff"/><rect x="1033" y="148" width="1" height="4" fill="#fff"/><rect x="1053" y="148" width="1" height="4" fill="#fff"/><rect x="1073" y="148" width="1" height="4" fill="#fff"/><rect x="1093" y="148" width="1" height="4" fill="#fff"/><rect x="1113" y="136" width="1" height="16" fill="#fff"/><rect x="1133" y="148" width="1" height="4" fill="#fff"/><rect x="1153" y="148" width="1" height="4" fill="#fff"/><rect x="1173" y="148" width="1" height="4" fill="#fff"/><rect x="1193" y="148" width="1" height="4" fill="#fff"/><rect x="1213" y="147" width="1" height="5" fill="#fff"/><rect x="1233" y="148" width="1" height="4" fill="#fff"/><rect x="1253" y="148" width="1" height="4" fill="#fff"/><rect x="1273" y="148" width="1" height="4" fill="#fff"/><rect x="1293" y="148" width="1" height="4" fill="#fff"/><rect x="1313" y="136" width="1" height="16" fill="#fff"/><rect x="1333" y="148" width="1" height="4" fill="#fff"/><rect x="1353" y="148" width="1" height="4" fill="#fff"/><rect x="1373" y="148" width="1" height="4" fill="#fff"/><rect x="1393" y="148" width="1" height="4" fill="#fff"/><rect x="1413" y="147" width="1" height="5" fill="#fff"/><rect x="1433" y="148" width="1" height="4" fill="#fff"/><rect x="1453" y="148" width="1" height="4" fill="#fff"/><rect x="1473" y="148" width="1" height="4" fill="#fff"/><rect x="1493" y="148" width="1" height="4" fill="#fff"/><rect x="1513" y="136" width="1" height="16" fill="#fff"/></g>
<g font-family="'Liberation Mono', monospace" font-size="11.67" fill="#fff" style="white-space:pre;will-change:transform"><text x="413.2" y="166" text-anchor="middle">7017</text><text x="485.7" y="166" text-anchor="middle">7018</text><text x="591.7" y="166" text-anchor="middle">7019</text><text x="736.7" y="166" text-anchor="middle">7020</text><text x="855.2" y="166" text-anchor="middle">7899</text><text x="934.2" y="166" text-anchor="middle">7900</text><text x="1013.7" y="166" text-anchor="middle">7901</text><text x="1119.7" y="166" text-anchor="middle">7902</text><text x="1264.7" y="166" text-anchor="middle">7903</text><text x="1383.2" y="166" text-anchor="middle">7020</text><text x="1462.2" y="166" text-anchor="middle">7021</text><text x="1514.2" y="166" text-anchor="middle">..</text><text x="433.2" y="258" text-anchor="middle">0008</text><text x="499.2" y="258" text-anchor="middle">0010</text><text x="604.7" y="258" text-anchor="middle">0020</text><text x="720.2" y="258" text-anchor="middle">0100</text><text x="786.2" y="258" text-anchor="middle">0000</text><text x="868.2" y="258" text-anchor="middle">0001</text><text x="961.2" y="258" text-anchor="middle">0008</text><text x="1027.2" y="258" text-anchor="middle">0010</text><text x="1132.7" y="258" text-anchor="middle">0020</text><text x="1248.2" y="258" text-anchor="middle">0100</text><text x="1314.2" y="258" text-anchor="middle">0000</text><text x="1396.2" y="258" text-anchor="middle">0001</text><text x="1489.2" y="258" text-anchor="middle">0008</text><text x="515" y="139">30,300.000000 us</text><text x="715" y="139">30,310.000000 us</text><text x="915" y="139">30,320.000000 us</text><text x="1115" y="139">30,330.000000 us</text><text x="1315" y="139">30,340.000000 us</text><text x="1515" y="139">30,350.000000 us</text></g>
<rect x="384" y="741" width="1141" height="1" fill="#fff"/>
<rect x="696" y="112" width="2" height="629" fill="#ffff00"/>
<rect x="696" y="96" width="117" height="16" fill="#fff"/>
<rect x="697" y="97" width="115" height="14" fill="#ffff00"/>
<text x="698" y="105" font-family="'Liberation Mono', monospace" font-size="11.67" fill="#000" style="white-space:pre">30,309.245000 us</text>
</svg>
<!-- scroll arrows -->
<svg class="abs" style="left:0;top:0" width="1550" height="807" viewBox="0 0 1550 807">
<path d="M249 784l-4 4.5 4 4.5M369 784l4 4.5-4 4.5M392 784l-4 4.5 4 4.5M1533 784l4 4.5-4 4.5" stroke="#6e6e6e" stroke-width="1.8" fill="none"/>
<path d="M1530.5 107l4.5-4.5 4.5 4.5M1530.5 773l4.5 4.5 4.5-4.5" stroke="#6e6e6e" stroke-width="1.8" fill="none"/>
<rect x="1530" y="129" width="8" height="62" rx="4" fill="#c4c4c4"/>
<rect x="1344" y="783" width="33" height="9" rx="4.5" fill="#c4c4c4"/>
</svg>
</body></html>
